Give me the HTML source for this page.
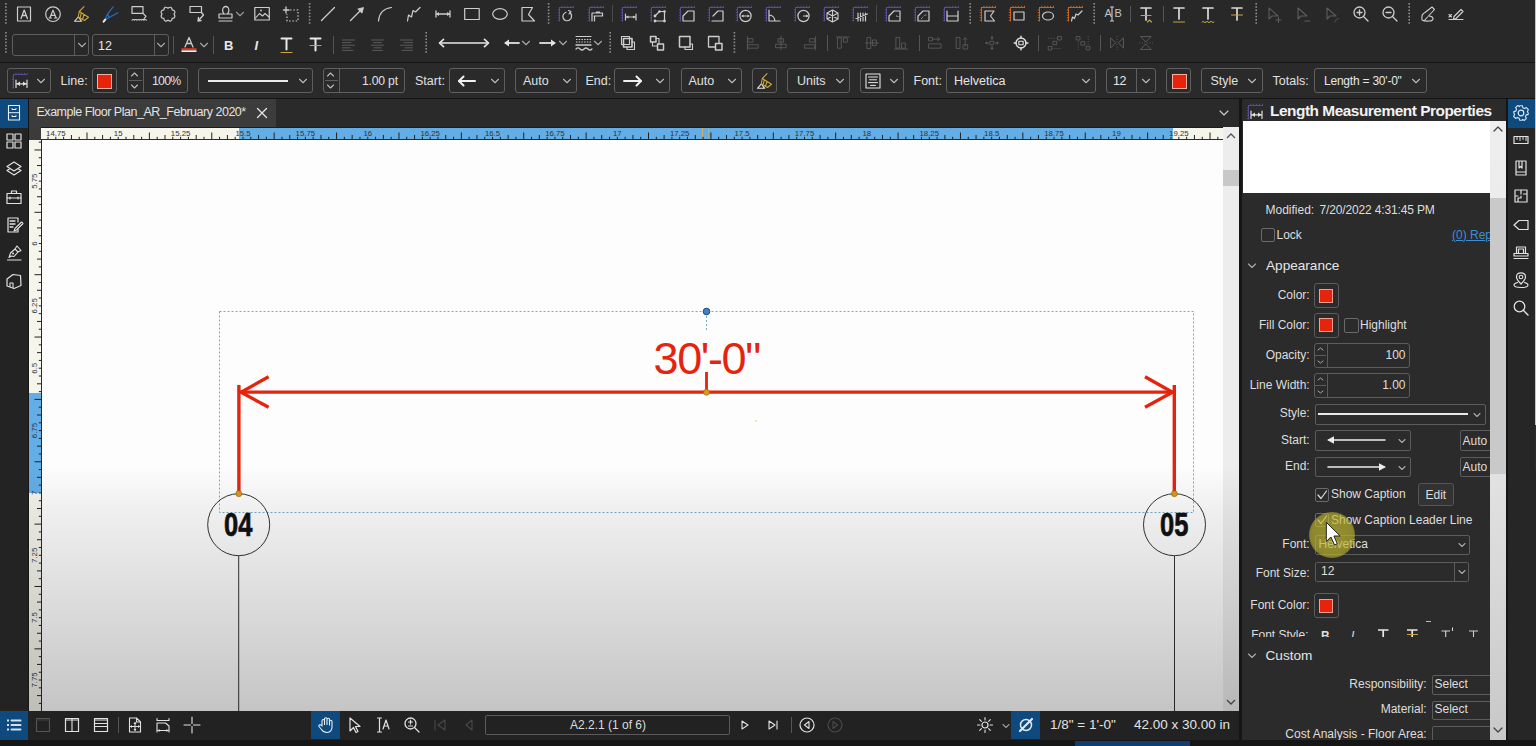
<!DOCTYPE html><html><head><meta charset="utf-8"><style>
html,body{margin:0;padding:0;width:1536px;height:746px;overflow:hidden;background:#282828;}
body{position:relative;font-family:"Liberation Sans",sans-serif;}
.t{position:absolute;white-space:nowrap;line-height:1;}
svg{overflow:visible;position:absolute}
</style></head><body>
<div style="position:absolute;left:0px;top:0px;width:1536px;height:62px;background:#282828"></div>
<div style="position:absolute;left:0px;top:62px;width:1536px;height:1px;background:#141414"></div>
<div style="position:absolute;left:0px;top:63px;width:1536px;height:35px;background:#2a2a2a"></div>
<div style="position:absolute;left:0px;top:98px;width:1536px;height:1px;background:#141414"></div>
<div style="position:absolute;left:0px;top:99px;width:28px;height:612px;background:#232323"></div>
<div style="position:absolute;left:28px;top:99px;width:1px;height:612px;background:#151515"></div>
<div style="position:absolute;left:0px;top:99px;width:28px;height:29px;background:#0f4a7e"></div>
<div style="position:absolute;left:29px;top:99px;width:1210px;height:28px;background:#2a2a2a"></div>
<div style="position:absolute;left:29px;top:99px;width:247px;height:28px;background:#3c3c3c"></div>
<div style="position:absolute;left:42px;top:140px;width:1181px;height:571px;background:#fdfdfd"></div>
<div style="position:absolute;left:0px;top:711px;width:1240px;height:29px;background:#222222"></div>
<div style="position:absolute;left:0px;top:711px;width:28px;height:29px;background:#0f4a7e"></div>
<div style="position:absolute;left:0px;top:740px;width:1536px;height:6px;background:#161616"></div>
<div style="position:absolute;left:1075px;top:741px;width:115px;height:5px;background:#113e6e"></div>
<div style="position:absolute;left:1239px;top:99px;width:3px;height:641px;background:#151515"></div>
<div style="position:absolute;left:1242px;top:99px;width:264px;height:641px;background:#2b2b2b"></div>
<div style="position:absolute;left:1243px;top:121px;width:247px;height:72px;background:#ffffff"></div>
<div style="position:absolute;left:1490px;top:121px;width:16px;height:619px;background:linear-gradient(#eeeeee,#e6e6e6 50%,#c8c8c8)"></div>
<div style="position:absolute;left:1490px;top:198px;width:16px;height:276px;background:#c9c9c9"></div>
<div style="position:absolute;left:1506px;top:99px;width:2px;height:641px;background:#151515"></div>
<div style="position:absolute;left:1508px;top:99px;width:28px;height:641px;background:#262626"></div>
<div style="position:absolute;left:1508px;top:99px;width:28px;height:29px;background:#0f4a7e"></div>
<div style="position:absolute;left:41px;top:127px;width:1182px;height:1px;background:#1c1c1c"></div>
<div style="position:absolute;left:29px;top:127px;width:12px;height:13px;background:#3b3b3b"></div>
<div style="position:absolute;left:41px;top:128px;width:1182px;height:11px;background:#f5f5ec"></div>
<div style="position:absolute;left:239px;top:128px;width:934px;height:11px;background:#63aee6"></div>
<div style="position:absolute;left:41px;top:139px;width:1182px;height:1px;background:#2a2a2a"></div>
<div style="position:absolute;left:702px;top:128px;width:1px;height:11px;background:#dcae5a;opacity:0.85"></div>
<div style="position:absolute;left:708px;top:128px;width:1px;height:11px;background:#c9b07a;opacity:0.5"></div>
<svg style="position:absolute;left:41px;top:128px;overflow:hidden" width="1182" height="11" viewBox="0 0 1182 11"><text x="14.81" y="8" text-anchor="middle" font-size="7.8" fill="#333" font-family="Liberation Sans">14.75</text><text x="77.20" y="8" text-anchor="middle" font-size="7.8" fill="#333" font-family="Liberation Sans">15</text><text x="139.59" y="8" text-anchor="middle" font-size="7.8" fill="#333" font-family="Liberation Sans">15.25</text><text x="201.98" y="8" text-anchor="middle" font-size="7.8" fill="#333" font-family="Liberation Sans">15.5</text><text x="264.37" y="8" text-anchor="middle" font-size="7.8" fill="#333" font-family="Liberation Sans">15.75</text><text x="326.76" y="8" text-anchor="middle" font-size="7.8" fill="#333" font-family="Liberation Sans">16</text><text x="389.15" y="8" text-anchor="middle" font-size="7.8" fill="#333" font-family="Liberation Sans">16.25</text><text x="451.54" y="8" text-anchor="middle" font-size="7.8" fill="#333" font-family="Liberation Sans">16.5</text><text x="513.93" y="8" text-anchor="middle" font-size="7.8" fill="#333" font-family="Liberation Sans">16.75</text><text x="576.32" y="8" text-anchor="middle" font-size="7.8" fill="#333" font-family="Liberation Sans">17</text><text x="638.71" y="8" text-anchor="middle" font-size="7.8" fill="#333" font-family="Liberation Sans">17.25</text><text x="701.10" y="8" text-anchor="middle" font-size="7.8" fill="#333" font-family="Liberation Sans">17.5</text><text x="763.49" y="8" text-anchor="middle" font-size="7.8" fill="#333" font-family="Liberation Sans">17.75</text><text x="825.88" y="8" text-anchor="middle" font-size="7.8" fill="#333" font-family="Liberation Sans">18</text><text x="888.27" y="8" text-anchor="middle" font-size="7.8" fill="#333" font-family="Liberation Sans">18.25</text><text x="950.66" y="8" text-anchor="middle" font-size="7.8" fill="#333" font-family="Liberation Sans">18.5</text><text x="1013.05" y="8" text-anchor="middle" font-size="7.8" fill="#333" font-family="Liberation Sans">18.75</text><text x="1075.44" y="8" text-anchor="middle" font-size="7.8" fill="#333" font-family="Liberation Sans">19</text><text x="1137.83" y="8" text-anchor="middle" font-size="7.8" fill="#333" font-family="Liberation Sans">19.25</text><rect x="6.51" y="8.80" width="1" height="2.2" fill="#222"/><rect x="14.31" y="8.80" width="1" height="2.2" fill="#222"/><rect x="22.11" y="8.80" width="1" height="2.2" fill="#222"/><rect x="29.91" y="7.00" width="1" height="4" fill="#222"/><rect x="37.71" y="8.80" width="1" height="2.2" fill="#222"/><rect x="45.50" y="4.50" width="1" height="6.5" fill="#222"/><rect x="53.30" y="8.80" width="1" height="2.2" fill="#222"/><rect x="61.10" y="7.00" width="1" height="4" fill="#222"/><rect x="68.90" y="8.80" width="1" height="2.2" fill="#222"/><rect x="76.70" y="8.80" width="1" height="2.2" fill="#222"/><rect x="84.50" y="8.80" width="1" height="2.2" fill="#222"/><rect x="92.30" y="7.00" width="1" height="4" fill="#222"/><rect x="100.10" y="8.80" width="1" height="2.2" fill="#222"/><rect x="107.89" y="4.50" width="1" height="6.5" fill="#222"/><rect x="115.69" y="8.80" width="1" height="2.2" fill="#222"/><rect x="123.49" y="7.00" width="1" height="4" fill="#222"/><rect x="131.29" y="8.80" width="1" height="2.2" fill="#222"/><rect x="139.09" y="8.80" width="1" height="2.2" fill="#222"/><rect x="146.89" y="8.80" width="1" height="2.2" fill="#222"/><rect x="154.69" y="7.00" width="1" height="4" fill="#222"/><rect x="162.49" y="8.80" width="1" height="2.2" fill="#222"/><rect x="170.28" y="4.50" width="1" height="6.5" fill="#222"/><rect x="178.08" y="8.80" width="1" height="2.2" fill="#222"/><rect x="185.88" y="7.00" width="1" height="4" fill="#222"/><rect x="193.68" y="8.80" width="1" height="2.2" fill="#222"/><rect x="201.48" y="8.80" width="1" height="2.2" fill="#222"/><rect x="209.28" y="8.80" width="1" height="2.2" fill="#222"/><rect x="217.08" y="7.00" width="1" height="4" fill="#222"/><rect x="224.88" y="8.80" width="1" height="2.2" fill="#222"/><rect x="232.68" y="4.50" width="1" height="6.5" fill="#222"/><rect x="240.47" y="8.80" width="1" height="2.2" fill="#222"/><rect x="248.27" y="7.00" width="1" height="4" fill="#222"/><rect x="256.07" y="8.80" width="1" height="2.2" fill="#222"/><rect x="263.87" y="8.80" width="1" height="2.2" fill="#222"/><rect x="271.67" y="8.80" width="1" height="2.2" fill="#222"/><rect x="279.47" y="7.00" width="1" height="4" fill="#222"/><rect x="287.27" y="8.80" width="1" height="2.2" fill="#222"/><rect x="295.06" y="4.50" width="1" height="6.5" fill="#222"/><rect x="302.86" y="8.80" width="1" height="2.2" fill="#222"/><rect x="310.66" y="7.00" width="1" height="4" fill="#222"/><rect x="318.46" y="8.80" width="1" height="2.2" fill="#222"/><rect x="326.26" y="8.80" width="1" height="2.2" fill="#222"/><rect x="334.06" y="8.80" width="1" height="2.2" fill="#222"/><rect x="341.86" y="7.00" width="1" height="4" fill="#222"/><rect x="349.66" y="8.80" width="1" height="2.2" fill="#222"/><rect x="357.45" y="4.50" width="1" height="6.5" fill="#222"/><rect x="365.25" y="8.80" width="1" height="2.2" fill="#222"/><rect x="373.05" y="7.00" width="1" height="4" fill="#222"/><rect x="380.85" y="8.80" width="1" height="2.2" fill="#222"/><rect x="388.65" y="8.80" width="1" height="2.2" fill="#222"/><rect x="396.45" y="8.80" width="1" height="2.2" fill="#222"/><rect x="404.25" y="7.00" width="1" height="4" fill="#222"/><rect x="412.05" y="8.80" width="1" height="2.2" fill="#222"/><rect x="419.85" y="4.50" width="1" height="6.5" fill="#222"/><rect x="427.64" y="8.80" width="1" height="2.2" fill="#222"/><rect x="435.44" y="7.00" width="1" height="4" fill="#222"/><rect x="443.24" y="8.80" width="1" height="2.2" fill="#222"/><rect x="451.04" y="8.80" width="1" height="2.2" fill="#222"/><rect x="458.84" y="8.80" width="1" height="2.2" fill="#222"/><rect x="466.64" y="7.00" width="1" height="4" fill="#222"/><rect x="474.44" y="8.80" width="1" height="2.2" fill="#222"/><rect x="482.24" y="4.50" width="1" height="6.5" fill="#222"/><rect x="490.03" y="8.80" width="1" height="2.2" fill="#222"/><rect x="497.83" y="7.00" width="1" height="4" fill="#222"/><rect x="505.63" y="8.80" width="1" height="2.2" fill="#222"/><rect x="513.43" y="8.80" width="1" height="2.2" fill="#222"/><rect x="521.23" y="8.80" width="1" height="2.2" fill="#222"/><rect x="529.03" y="7.00" width="1" height="4" fill="#222"/><rect x="536.83" y="8.80" width="1" height="2.2" fill="#222"/><rect x="544.62" y="4.50" width="1" height="6.5" fill="#222"/><rect x="552.42" y="8.80" width="1" height="2.2" fill="#222"/><rect x="560.22" y="7.00" width="1" height="4" fill="#222"/><rect x="568.02" y="8.80" width="1" height="2.2" fill="#222"/><rect x="575.82" y="8.80" width="1" height="2.2" fill="#222"/><rect x="583.62" y="8.80" width="1" height="2.2" fill="#222"/><rect x="591.42" y="7.00" width="1" height="4" fill="#222"/><rect x="599.22" y="8.80" width="1" height="2.2" fill="#222"/><rect x="607.01" y="4.50" width="1" height="6.5" fill="#222"/><rect x="614.81" y="8.80" width="1" height="2.2" fill="#222"/><rect x="622.61" y="7.00" width="1" height="4" fill="#222"/><rect x="630.41" y="8.80" width="1" height="2.2" fill="#222"/><rect x="638.21" y="8.80" width="1" height="2.2" fill="#222"/><rect x="646.01" y="8.80" width="1" height="2.2" fill="#222"/><rect x="653.81" y="7.00" width="1" height="4" fill="#222"/><rect x="661.61" y="8.80" width="1" height="2.2" fill="#222"/><rect x="669.40" y="4.50" width="1" height="6.5" fill="#222"/><rect x="677.20" y="8.80" width="1" height="2.2" fill="#222"/><rect x="685.00" y="7.00" width="1" height="4" fill="#222"/><rect x="692.80" y="8.80" width="1" height="2.2" fill="#222"/><rect x="700.60" y="8.80" width="1" height="2.2" fill="#222"/><rect x="708.40" y="8.80" width="1" height="2.2" fill="#222"/><rect x="716.20" y="7.00" width="1" height="4" fill="#222"/><rect x="724.00" y="8.80" width="1" height="2.2" fill="#222"/><rect x="731.79" y="4.50" width="1" height="6.5" fill="#222"/><rect x="739.59" y="8.80" width="1" height="2.2" fill="#222"/><rect x="747.39" y="7.00" width="1" height="4" fill="#222"/><rect x="755.19" y="8.80" width="1" height="2.2" fill="#222"/><rect x="762.99" y="8.80" width="1" height="2.2" fill="#222"/><rect x="770.79" y="8.80" width="1" height="2.2" fill="#222"/><rect x="778.59" y="7.00" width="1" height="4" fill="#222"/><rect x="786.39" y="8.80" width="1" height="2.2" fill="#222"/><rect x="794.19" y="4.50" width="1" height="6.5" fill="#222"/><rect x="801.98" y="8.80" width="1" height="2.2" fill="#222"/><rect x="809.78" y="7.00" width="1" height="4" fill="#222"/><rect x="817.58" y="8.80" width="1" height="2.2" fill="#222"/><rect x="825.38" y="8.80" width="1" height="2.2" fill="#222"/><rect x="833.18" y="8.80" width="1" height="2.2" fill="#222"/><rect x="840.98" y="7.00" width="1" height="4" fill="#222"/><rect x="848.78" y="8.80" width="1" height="2.2" fill="#222"/><rect x="856.58" y="4.50" width="1" height="6.5" fill="#222"/><rect x="864.37" y="8.80" width="1" height="2.2" fill="#222"/><rect x="872.17" y="7.00" width="1" height="4" fill="#222"/><rect x="879.97" y="8.80" width="1" height="2.2" fill="#222"/><rect x="887.77" y="8.80" width="1" height="2.2" fill="#222"/><rect x="895.57" y="8.80" width="1" height="2.2" fill="#222"/><rect x="903.37" y="7.00" width="1" height="4" fill="#222"/><rect x="911.17" y="8.80" width="1" height="2.2" fill="#222"/><rect x="918.97" y="4.50" width="1" height="6.5" fill="#222"/><rect x="926.76" y="8.80" width="1" height="2.2" fill="#222"/><rect x="934.56" y="7.00" width="1" height="4" fill="#222"/><rect x="942.36" y="8.80" width="1" height="2.2" fill="#222"/><rect x="950.16" y="8.80" width="1" height="2.2" fill="#222"/><rect x="957.96" y="8.80" width="1" height="2.2" fill="#222"/><rect x="965.76" y="7.00" width="1" height="4" fill="#222"/><rect x="973.56" y="8.80" width="1" height="2.2" fill="#222"/><rect x="981.36" y="4.50" width="1" height="6.5" fill="#222"/><rect x="989.15" y="8.80" width="1" height="2.2" fill="#222"/><rect x="996.95" y="7.00" width="1" height="4" fill="#222"/><rect x="1004.75" y="8.80" width="1" height="2.2" fill="#222"/><rect x="1012.55" y="8.80" width="1" height="2.2" fill="#222"/><rect x="1020.35" y="8.80" width="1" height="2.2" fill="#222"/><rect x="1028.15" y="7.00" width="1" height="4" fill="#222"/><rect x="1035.95" y="8.80" width="1" height="2.2" fill="#222"/><rect x="1043.74" y="4.50" width="1" height="6.5" fill="#222"/><rect x="1051.54" y="8.80" width="1" height="2.2" fill="#222"/><rect x="1059.34" y="7.00" width="1" height="4" fill="#222"/><rect x="1067.14" y="8.80" width="1" height="2.2" fill="#222"/><rect x="1074.94" y="8.80" width="1" height="2.2" fill="#222"/><rect x="1082.74" y="8.80" width="1" height="2.2" fill="#222"/><rect x="1090.54" y="7.00" width="1" height="4" fill="#222"/><rect x="1098.34" y="8.80" width="1" height="2.2" fill="#222"/><rect x="1106.14" y="4.50" width="1" height="6.5" fill="#222"/><rect x="1113.93" y="8.80" width="1" height="2.2" fill="#222"/><rect x="1121.73" y="7.00" width="1" height="4" fill="#222"/><rect x="1129.53" y="8.80" width="1" height="2.2" fill="#222"/><rect x="1137.33" y="8.80" width="1" height="2.2" fill="#222"/><rect x="1145.13" y="8.80" width="1" height="2.2" fill="#222"/><rect x="1152.93" y="7.00" width="1" height="4" fill="#222"/><rect x="1160.73" y="8.80" width="1" height="2.2" fill="#222"/><rect x="1168.53" y="4.50" width="1" height="6.5" fill="#222"/><rect x="1176.32" y="8.80" width="1" height="2.2" fill="#222"/></svg>
<div style="position:absolute;left:29px;top:140px;width:12px;height:571px;background:#f5f5ec"></div>
<div style="position:absolute;left:29px;top:393px;width:12px;height:100px;background:#63aee6"></div>
<div style="position:absolute;left:41px;top:140px;width:1px;height:571px;background:#2a2a2a"></div>
<svg style="position:absolute;left:29px;top:140px;overflow:hidden" width="12" height="571" viewBox="0 0 12 571"><text x="0" y="0" transform="translate(8.3 41.14) rotate(-90)" text-anchor="middle" font-size="7.8" fill="#333" font-family="Liberation Sans">5.75</text><text x="0" y="0" transform="translate(8.3 103.50) rotate(-90)" text-anchor="middle" font-size="7.8" fill="#333" font-family="Liberation Sans">6</text><text x="0" y="0" transform="translate(8.3 165.86) rotate(-90)" text-anchor="middle" font-size="7.8" fill="#333" font-family="Liberation Sans">6.25</text><text x="0" y="0" transform="translate(8.3 228.22) rotate(-90)" text-anchor="middle" font-size="7.8" fill="#333" font-family="Liberation Sans">6.5</text><text x="0" y="0" transform="translate(8.3 290.58) rotate(-90)" text-anchor="middle" font-size="7.8" fill="#333" font-family="Liberation Sans">6.75</text><text x="0" y="0" transform="translate(8.3 352.94) rotate(-90)" text-anchor="middle" font-size="7.8" fill="#333" font-family="Liberation Sans">7</text><text x="0" y="0" transform="translate(8.3 415.30) rotate(-90)" text-anchor="middle" font-size="7.8" fill="#333" font-family="Liberation Sans">7.25</text><text x="0" y="0" transform="translate(8.3 477.66) rotate(-90)" text-anchor="middle" font-size="7.8" fill="#333" font-family="Liberation Sans">7.5</text><text x="0" y="0" transform="translate(8.3 540.02) rotate(-90)" text-anchor="middle" font-size="7.8" fill="#333" font-family="Liberation Sans">7.75</text><rect x="9.80" y="1.66" width="2.2" height="1" fill="#222"/><rect x="5.50" y="9.46" width="6.5" height="1" fill="#222"/><rect x="9.80" y="17.25" width="2.2" height="1" fill="#222"/><rect x="8.00" y="25.05" width="4" height="1" fill="#222"/><rect x="9.80" y="32.84" width="2.2" height="1" fill="#222"/><rect x="9.80" y="40.64" width="2.2" height="1" fill="#222"/><rect x="9.80" y="48.44" width="2.2" height="1" fill="#222"/><rect x="8.00" y="56.23" width="4" height="1" fill="#222"/><rect x="9.80" y="64.03" width="2.2" height="1" fill="#222"/><rect x="5.50" y="71.82" width="6.5" height="1" fill="#222"/><rect x="9.80" y="79.61" width="2.2" height="1" fill="#222"/><rect x="8.00" y="87.41" width="4" height="1" fill="#222"/><rect x="9.80" y="95.20" width="2.2" height="1" fill="#222"/><rect x="9.80" y="103.00" width="2.2" height="1" fill="#222"/><rect x="9.80" y="110.79" width="2.2" height="1" fill="#222"/><rect x="8.00" y="118.59" width="4" height="1" fill="#222"/><rect x="9.80" y="126.38" width="2.2" height="1" fill="#222"/><rect x="5.50" y="134.18" width="6.5" height="1" fill="#222"/><rect x="9.80" y="141.98" width="2.2" height="1" fill="#222"/><rect x="8.00" y="149.77" width="4" height="1" fill="#222"/><rect x="9.80" y="157.56" width="2.2" height="1" fill="#222"/><rect x="9.80" y="165.36" width="2.2" height="1" fill="#222"/><rect x="9.80" y="173.15" width="2.2" height="1" fill="#222"/><rect x="8.00" y="180.95" width="4" height="1" fill="#222"/><rect x="9.80" y="188.75" width="2.2" height="1" fill="#222"/><rect x="5.50" y="196.54" width="6.5" height="1" fill="#222"/><rect x="9.80" y="204.33" width="2.2" height="1" fill="#222"/><rect x="8.00" y="212.13" width="4" height="1" fill="#222"/><rect x="9.80" y="219.92" width="2.2" height="1" fill="#222"/><rect x="9.80" y="227.72" width="2.2" height="1" fill="#222"/><rect x="9.80" y="235.51" width="2.2" height="1" fill="#222"/><rect x="8.00" y="243.31" width="4" height="1" fill="#222"/><rect x="9.80" y="251.11" width="2.2" height="1" fill="#222"/><rect x="5.50" y="258.90" width="6.5" height="1" fill="#222"/><rect x="9.80" y="266.69" width="2.2" height="1" fill="#222"/><rect x="8.00" y="274.49" width="4" height="1" fill="#222"/><rect x="9.80" y="282.28" width="2.2" height="1" fill="#222"/><rect x="9.80" y="290.08" width="2.2" height="1" fill="#222"/><rect x="9.80" y="297.88" width="2.2" height="1" fill="#222"/><rect x="8.00" y="305.67" width="4" height="1" fill="#222"/><rect x="9.80" y="313.47" width="2.2" height="1" fill="#222"/><rect x="5.50" y="321.26" width="6.5" height="1" fill="#222"/><rect x="9.80" y="329.06" width="2.2" height="1" fill="#222"/><rect x="8.00" y="336.85" width="4" height="1" fill="#222"/><rect x="9.80" y="344.64" width="2.2" height="1" fill="#222"/><rect x="9.80" y="352.44" width="2.2" height="1" fill="#222"/><rect x="9.80" y="360.24" width="2.2" height="1" fill="#222"/><rect x="8.00" y="368.03" width="4" height="1" fill="#222"/><rect x="9.80" y="375.83" width="2.2" height="1" fill="#222"/><rect x="5.50" y="383.62" width="6.5" height="1" fill="#222"/><rect x="9.80" y="391.41" width="2.2" height="1" fill="#222"/><rect x="8.00" y="399.21" width="4" height="1" fill="#222"/><rect x="9.80" y="407.00" width="2.2" height="1" fill="#222"/><rect x="9.80" y="414.80" width="2.2" height="1" fill="#222"/><rect x="9.80" y="422.60" width="2.2" height="1" fill="#222"/><rect x="8.00" y="430.39" width="4" height="1" fill="#222"/><rect x="9.80" y="438.18" width="2.2" height="1" fill="#222"/><rect x="5.50" y="445.98" width="6.5" height="1" fill="#222"/><rect x="9.80" y="453.77" width="2.2" height="1" fill="#222"/><rect x="8.00" y="461.57" width="4" height="1" fill="#222"/><rect x="9.80" y="469.37" width="2.2" height="1" fill="#222"/><rect x="9.80" y="477.16" width="2.2" height="1" fill="#222"/><rect x="9.80" y="484.95" width="2.2" height="1" fill="#222"/><rect x="8.00" y="492.75" width="4" height="1" fill="#222"/><rect x="9.80" y="500.55" width="2.2" height="1" fill="#222"/><rect x="5.50" y="508.34" width="6.5" height="1" fill="#222"/><rect x="9.80" y="516.13" width="2.2" height="1" fill="#222"/><rect x="8.00" y="523.93" width="4" height="1" fill="#222"/><rect x="9.80" y="531.72" width="2.2" height="1" fill="#222"/><rect x="9.80" y="539.52" width="2.2" height="1" fill="#222"/><rect x="9.80" y="547.32" width="2.2" height="1" fill="#222"/><rect x="8.00" y="555.11" width="4" height="1" fill="#222"/><rect x="9.80" y="562.90" width="2.2" height="1" fill="#222"/></svg>
<div style="position:absolute;left:1223px;top:127px;width:16px;height:584px;background:#ededed"></div>
<div style="position:absolute;left:1223px;top:170px;width:16px;height:16px;background:#c8c8c8"></div>
<svg style="position:absolute;left:1223px;top:127px;" width="16" height="16" viewBox="0 0 16 16"><path d="M4 11 L8 7 L12 11" stroke="#555" stroke-width="1.3" fill="none"/></svg>
<svg style="position:absolute;left:1223px;top:695px;" width="16" height="16" viewBox="0 0 16 16"><path d="M4 5 L8 9 L12 5" stroke="#555" stroke-width="1.3" fill="none"/></svg>
<svg style="position:absolute;left:0px;top:0px;pointer-events:none" width="1536" height="746" viewBox="0 0 1536 746"><rect x="219.5" y="311.5" width="974" height="201" fill="none" stroke="#74aac8" stroke-width="1" stroke-dasharray="2 2"/><line x1="706.5" y1="312" x2="706.5" y2="330" stroke="#74aac8" stroke-width="1" stroke-dasharray="2 2"/><line x1="238.7" y1="556" x2="238.7" y2="711" stroke="#333" stroke-width="1"/><line x1="1174.5" y1="556" x2="1174.5" y2="711" stroke="#333" stroke-width="1"/><circle cx="238.7" cy="524.7" r="31" fill="none" stroke="#333" stroke-width="1"/><circle cx="1174.5" cy="524.7" r="31" fill="none" stroke="#333" stroke-width="1"/><line x1="239" y1="392.2" x2="1174" y2="392.2" stroke="#e5240e" stroke-width="3.3"/><line x1="238.9" y1="385" x2="238.9" y2="494" stroke="#e5240e" stroke-width="3.4"/><line x1="1174.3" y1="385" x2="1174.3" y2="494" stroke="#e5240e" stroke-width="3.4"/><path d="M268.6 376.8 L241 392.2 L268.6 407.2" fill="none" stroke="#e5240e" stroke-width="3.3"/><path d="M1145 376.8 L1172.5 392.2 L1145 407.2" fill="none" stroke="#e5240e" stroke-width="3.3"/><line x1="706.5" y1="372" x2="706.5" y2="392" stroke="#e5240e" stroke-width="2.8"/><circle cx="706.5" cy="311.5" r="3.3" fill="#3f82c8" stroke="#1d4a7a" stroke-width="1"/><circle cx="238.8" cy="493.7" r="3" fill="#d89a1c" stroke="#8a6a10" stroke-width="0.6"/><circle cx="1174.4" cy="493.7" r="3" fill="#d89a1c" stroke="#8a6a10" stroke-width="0.6"/><circle cx="706.5" cy="392.3" r="3" fill="#d89a1c" stroke="#8a6a10" stroke-width="0.6"/></svg>
<div style="position:absolute;left:754.5px;top:419.5px;width:2px;height:2px;background:#efe27a;border-radius:1px"></div>
<div class="t" style="left:653.5px;top:335.8px;font-size:45px;color:#e5240e;font-weight:normal;letter-spacing:-1.4px;">30'-0"</div>
<div class="t" style="left:223.8px;top:507px;font-size:34px;color:#111;font-weight:bold;-webkit-text-stroke:0.7px #111;transform:scaleX(0.75);transform-origin:0 0;">04</div>
<div class="t" style="left:1159.6px;top:507px;font-size:34px;color:#111;font-weight:bold;-webkit-text-stroke:0.7px #111;transform:scaleX(0.75);transform-origin:0 0;">05</div>
<svg style="position:absolute;left:0px;top:3px;" width="1536" height="22" viewBox="0 0 1536 22"><rect x="5.10" y="0.00" width="1.6" height="1.6" fill="#8c8c8c"/><rect x="5.10" y="3.20" width="1.6" height="1.6" fill="#8c8c8c"/><rect x="5.10" y="6.40" width="1.6" height="1.6" fill="#8c8c8c"/><rect x="5.10" y="9.60" width="1.6" height="1.6" fill="#8c8c8c"/><rect x="5.10" y="12.80" width="1.6" height="1.6" fill="#8c8c8c"/><rect x="5.10" y="16.00" width="1.6" height="1.6" fill="#8c8c8c"/><rect x="5.10" y="19.20" width="1.6" height="1.6" fill="#8c8c8c"/></svg>
<svg style="position:absolute;left:15.0px;top:4.5px;" width="18" height="18" viewBox="0 0 18 18"><rect x="2.5" y="2" width="13" height="14" stroke="#cdcdcd" stroke-width="1.2" fill="none" stroke-linecap="round" stroke-linejoin="round"/><path d="M6 13.5 L9.2 5 L12.4 13.5 M7.2 10.5 H11.2" stroke="#cdcdcd" stroke-width="1.3" fill="none" stroke-linecap="round" stroke-linejoin="round"/></svg>
<svg style="position:absolute;left:43.5px;top:4.5px;" width="18" height="18" viewBox="0 0 18 18"><circle cx="9" cy="9.2" r="7.3" stroke="#cdcdcd" stroke-width="1.2" fill="none" stroke-linecap="round" stroke-linejoin="round"/><path d="M5.8 13 L9 5.2 L12.2 13 M7 10.3 H11 M5 13 H7.5 M10.5 13 H13" stroke="#cdcdcd" stroke-width="1.2" fill="none" stroke-linecap="round" stroke-linejoin="round"/></svg>
<svg style="position:absolute;left:73.0px;top:4.5px;" width="18" height="18" viewBox="0 0 18 18"><path d="M1.5 16.3 H8.7 L5.2 12 Z" stroke="#d8d8d8" stroke-width="1.1" fill="none" stroke-linecap="round" stroke-linejoin="round"/><path d="M11 1.7 L6.3 6.5 L15.5 12.3 L11.5 15.5 L5.2 12 L6.3 6.5 M8.3 8 L7 13 M11 9.5 L9.5 14.5" stroke="#c9a53a" stroke-width="1.1" fill="none" stroke-linecap="round" stroke-linejoin="round"/></svg>
<svg style="position:absolute;left:100.5px;top:4.5px;" width="18" height="18" viewBox="0 0 18 18"><path d="M12.1 1.9 L6.4 9.2 L4 15 M16.8 7.8 L8.3 12.3 L4 15 M6.4 9.2 L8.3 12.3" stroke="#2468a8" stroke-width="1.4" fill="none" stroke-linecap="round" stroke-linejoin="round"/><path d="M2.6 16.6 L4.2 14.6" stroke="#e0eef8" stroke-width="2" fill="none" stroke-linecap="round" stroke-linejoin="round"/></svg>
<svg style="position:absolute;left:130.0px;top:4.5px;" width="18" height="18" viewBox="0 0 18 18"><rect x="2" y="1.6" width="11" height="6.8" stroke="#cdcdcd" stroke-width="1.2" fill="none" stroke-linecap="round" stroke-linejoin="round"/><path d="M13 8.4 L16 11.2 L13.6 14.5" stroke="#cdcdcd" stroke-width="1.2" fill="none" stroke-linecap="round" stroke-linejoin="round"/><path d="M2 15.2 Q3.2 13.8 4.4 15.2 Q5.6 13.8 6.8 15.2 Q8 13.8 9.2 15.2 Q10.4 13.8 11.6 15.2 Q12.8 13.8 14 15.2 Q15.2 13.8 16.4 15.2" stroke="#cdcdcd" stroke-width="1.1" fill="none" stroke-linecap="round" stroke-linejoin="round"/></svg>
<svg style="position:absolute;left:159.0px;top:4.5px;" width="18" height="18" viewBox="0 0 18 18"><path d="M9.00 3.20 Q12.52 0.70 13.24 4.96 Q17.50 5.68 15.00 9.20 Q17.50 12.72 13.24 13.44 Q12.52 17.70 9.00 15.20 Q5.48 17.70 4.76 13.44 Q0.50 12.72 3.00 9.20 Q0.50 5.68 4.76 4.96 Q5.48 0.70 9.00 3.20Z" stroke="#cdcdcd" stroke-width="1.2" fill="none" stroke-linecap="round" stroke-linejoin="round"/></svg>
<svg style="position:absolute;left:187.6px;top:4.5px;" width="18" height="18" viewBox="0 0 18 18"><rect x="2" y="1.5" width="11.5" height="6" stroke="#cdcdcd" stroke-width="1.2" fill="none" stroke-linecap="round" stroke-linejoin="round"/><path d="M13.5 7.5 L15.5 10 L10 16 M10 16 L10.5 12.5 M10 16 L13 15.5" stroke="#cdcdcd" stroke-width="1.3" fill="none" stroke-linecap="round" stroke-linejoin="round"/></svg>
<svg style="position:absolute;left:217.0px;top:4.5px;" width="18" height="18" viewBox="0 0 18 18"><path d="M7 9 Q4.5 5.5 6.5 2.5 Q9 0.5 11 2.5 Q13 5.5 10.5 9 M2 9 H15 V13 H2 Z M2 16 H15" stroke="#cdcdcd" stroke-width="1.2" fill="none" stroke-linecap="round" stroke-linejoin="round"/></svg>
<svg style="position:absolute;left:234.6px;top:10px;" width="10" height="8" viewBox="0 0 10 8"><path d="M1.5 2.25 L5 5.75 L8.5 2.25" stroke="#999" stroke-width="1.1" fill="none" stroke-linecap="round" stroke-linejoin="round"/></svg>
<svg style="position:absolute;left:252.5px;top:4.5px;" width="18" height="18" viewBox="0 0 18 18"><rect x="1.8" y="2.5" width="14.5" height="12.5" stroke="#cdcdcd" stroke-width="1.2" fill="none" stroke-linecap="round" stroke-linejoin="round"/><path d="M2.5 13 L6.5 8.5 L9.5 11 L12 8.5 L16 12" stroke="#cdcdcd" stroke-width="1.1" fill="none" stroke-linecap="round" stroke-linejoin="round"/><circle cx="8" cy="5.5" r="0.9" fill="#cdcdcd"/></svg>
<svg style="position:absolute;left:281.5px;top:4.5px;" width="18" height="18" viewBox="0 0 18 18"><path d="M1.5 5 H7 M4 2 V8" stroke="#cdcdcd" stroke-width="1.3" fill="none" stroke-linecap="round" stroke-linejoin="round"/><path d="M8 5 H16 V16 H5 V9" stroke="#cdcdcd" stroke-width="1.2" fill="none" stroke-dasharray="1.5 1.8"/></svg>
<svg style="position:absolute;left:0px;top:3px;" width="1536" height="22" viewBox="0 0 1536 22"><rect x="308.80" y="0.00" width="1.6" height="1.6" fill="#8c8c8c"/><rect x="308.80" y="3.20" width="1.6" height="1.6" fill="#8c8c8c"/><rect x="308.80" y="6.40" width="1.6" height="1.6" fill="#8c8c8c"/><rect x="308.80" y="9.60" width="1.6" height="1.6" fill="#8c8c8c"/><rect x="308.80" y="12.80" width="1.6" height="1.6" fill="#8c8c8c"/><rect x="308.80" y="16.00" width="1.6" height="1.6" fill="#8c8c8c"/><rect x="308.80" y="19.20" width="1.6" height="1.6" fill="#8c8c8c"/></svg>
<svg style="position:absolute;left:318.6px;top:4.5px;" width="18" height="18" viewBox="0 0 18 18"><path d="M2.5 15.5 L15.5 2.5" stroke="#cdcdcd" stroke-width="1.3" fill="none" stroke-linecap="round" stroke-linejoin="round"/></svg>
<svg style="position:absolute;left:347.5px;top:4.5px;" width="18" height="18" viewBox="0 0 18 18"><path d="M2.5 15.5 L13.5 4.5" stroke="#cdcdcd" stroke-width="1.3" fill="none" stroke-linecap="round" stroke-linejoin="round"/><path d="M15.5 2.5 L9.8 4 L14 8.2 Z" fill="#cdcdcd" stroke="#cdcdcd" stroke-width="0.8"/></svg>
<svg style="position:absolute;left:376.3px;top:4.5px;" width="18" height="18" viewBox="0 0 18 18"><path d="M2.5 16 Q3.5 4 15.5 2.5" stroke="#cdcdcd" stroke-width="1.2" fill="none" stroke-linecap="round" stroke-linejoin="round"/></svg>
<svg style="position:absolute;left:405.0px;top:4.5px;" width="18" height="18" viewBox="0 0 18 18"><path d="M2.5 16 L3.5 10 L6.5 12 L8 5.5 L10.5 7 L15 2.5" stroke="#cdcdcd" stroke-width="1.2" fill="none" stroke-linecap="round" stroke-linejoin="round"/></svg>
<svg style="position:absolute;left:433.8px;top:4.5px;" width="18" height="18" viewBox="0 0 18 18"><path d="M2 6 V12 M16 6 V12 M2 9 H16" stroke="#cdcdcd" stroke-width="1.3" fill="none" stroke-linecap="round" stroke-linejoin="round"/><path d="M2 9 L5 7 V11 Z M16 9 L13 7 V11 Z" fill="#cdcdcd"/></svg>
<svg style="position:absolute;left:462.5px;top:4.5px;" width="18" height="18" viewBox="0 0 18 18"><rect x="1.7" y="3.5" width="14.5" height="11" stroke="#cdcdcd" stroke-width="1.2" fill="none" stroke-linecap="round" stroke-linejoin="round"/></svg>
<svg style="position:absolute;left:491.3px;top:4.5px;" width="18" height="18" viewBox="0 0 18 18"><ellipse cx="9" cy="9" rx="7.3" ry="5.3" stroke="#cdcdcd" stroke-width="1.2" fill="none" stroke-linecap="round" stroke-linejoin="round"/></svg>
<svg style="position:absolute;left:520.3px;top:4.5px;" width="18" height="18" viewBox="0 0 18 18"><path d="M2 2.5 H12.5 L8.5 9.5 L14.5 16 H2 Z" stroke="#cdcdcd" stroke-width="1.2" fill="none" stroke-linecap="round" stroke-linejoin="round"/></svg>
<svg style="position:absolute;left:0px;top:3px;" width="1536" height="22" viewBox="0 0 1536 22"><rect x="547.80" y="0.00" width="1.6" height="1.6" fill="#8c8c8c"/><rect x="547.80" y="3.20" width="1.6" height="1.6" fill="#8c8c8c"/><rect x="547.80" y="6.40" width="1.6" height="1.6" fill="#8c8c8c"/><rect x="547.80" y="9.60" width="1.6" height="1.6" fill="#8c8c8c"/><rect x="547.80" y="12.80" width="1.6" height="1.6" fill="#8c8c8c"/><rect x="547.80" y="16.00" width="1.6" height="1.6" fill="#8c8c8c"/><rect x="547.80" y="19.20" width="1.6" height="1.6" fill="#8c8c8c"/></svg>
<svg style="position:absolute;left:557.4px;top:5.0px;" width="18" height="18" viewBox="0 0 18 18"><path d="M2 2.5 H17 M2.5 2 V16.5" stroke="#5d4fa0" stroke-width="1" fill="none" opacity="0.9"/><rect x="4.5" y="0.8" width="0.9" height="1.6" fill="#5d4fa0"/><rect x="0.8" y="4.5" width="1.6" height="0.9" fill="#5d4fa0"/><rect x="7.4" y="0.8" width="0.9" height="1.6" fill="#5d4fa0"/><rect x="0.8" y="7.1" width="1.6" height="0.9" fill="#5d4fa0"/><rect x="10.3" y="0.8" width="0.9" height="1.6" fill="#5d4fa0"/><rect x="0.8" y="9.7" width="1.6" height="0.9" fill="#5d4fa0"/><rect x="13.2" y="0.8" width="0.9" height="1.6" fill="#5d4fa0"/><rect x="0.8" y="12.3" width="1.6" height="0.9" fill="#5d4fa0"/><rect x="16.1" y="0.8" width="0.9" height="1.6" fill="#5d4fa0"/><rect x="0.8" y="14.9" width="1.6" height="0.9" fill="#5d4fa0"/><path d="M13 7.5 Q15.5 10 14 13.5 Q12 16.5 8.5 15.5 Q5.5 14 6 10.5 Q6.5 8 9 7.2" stroke="#cdcdcd" stroke-width="1.2" fill="none" stroke-linecap="round" stroke-linejoin="round"/><path d="M11.5 5.5 L14 6.5 L12 9" stroke="#cdcdcd" stroke-width="1.1" fill="none" stroke-linecap="round" stroke-linejoin="round"/></svg>
<svg style="position:absolute;left:586.7px;top:5.0px;" width="18" height="18" viewBox="0 0 18 18"><path d="M2 2.5 H17 M2.5 2 V16.5" stroke="#5d4fa0" stroke-width="1" fill="none" opacity="0.9"/><rect x="4.5" y="0.8" width="0.9" height="1.6" fill="#5d4fa0"/><rect x="0.8" y="4.5" width="1.6" height="0.9" fill="#5d4fa0"/><rect x="7.4" y="0.8" width="0.9" height="1.6" fill="#5d4fa0"/><rect x="0.8" y="7.1" width="1.6" height="0.9" fill="#5d4fa0"/><rect x="10.3" y="0.8" width="0.9" height="1.6" fill="#5d4fa0"/><rect x="0.8" y="9.7" width="1.6" height="0.9" fill="#5d4fa0"/><rect x="13.2" y="0.8" width="0.9" height="1.6" fill="#5d4fa0"/><rect x="0.8" y="12.3" width="1.6" height="0.9" fill="#5d4fa0"/><rect x="16.1" y="0.8" width="0.9" height="1.6" fill="#5d4fa0"/><rect x="0.8" y="14.9" width="1.6" height="0.9" fill="#5d4fa0"/><path d="M5 16 V8 H15.5 V11 H7 M7.5 16 V11 M9.5 8 V7 H12.5 V8" stroke="#cdcdcd" stroke-width="1.2" fill="none" stroke-linecap="round" stroke-linejoin="round"/></svg>
<div style="position:absolute;left:612px;top:5px;width:1px;height:17px;background:#4a4a4a"></div>
<svg style="position:absolute;left:620.3px;top:5.0px;" width="18" height="18" viewBox="0 0 18 18"><path d="M2 2.5 H17 M2.5 2 V16.5" stroke="#5d4fa0" stroke-width="1" fill="none" opacity="0.9"/><rect x="4.5" y="0.8" width="0.9" height="1.6" fill="#5d4fa0"/><rect x="0.8" y="4.5" width="1.6" height="0.9" fill="#5d4fa0"/><rect x="7.4" y="0.8" width="0.9" height="1.6" fill="#5d4fa0"/><rect x="0.8" y="7.1" width="1.6" height="0.9" fill="#5d4fa0"/><rect x="10.3" y="0.8" width="0.9" height="1.6" fill="#5d4fa0"/><rect x="0.8" y="9.7" width="1.6" height="0.9" fill="#5d4fa0"/><rect x="13.2" y="0.8" width="0.9" height="1.6" fill="#5d4fa0"/><rect x="0.8" y="12.3" width="1.6" height="0.9" fill="#5d4fa0"/><rect x="16.1" y="0.8" width="0.9" height="1.6" fill="#5d4fa0"/><rect x="0.8" y="14.9" width="1.6" height="0.9" fill="#5d4fa0"/><path d="M5.5 9 V15 M16 9 V15 M5.5 12 H16" stroke="#cdcdcd" stroke-width="1.2" fill="none" stroke-linecap="round" stroke-linejoin="round"/><path d="M6 12 L8.5 10.5 V13.5 Z M15.5 12 L13 10.5 V13.5 Z" fill="#cdcdcd"/></svg>
<svg style="position:absolute;left:648.8px;top:5.0px;" width="18" height="18" viewBox="0 0 18 18"><path d="M2 2.5 H17 M2.5 2 V16.5" stroke="#5d4fa0" stroke-width="1" fill="none" opacity="0.9"/><rect x="4.5" y="0.8" width="0.9" height="1.6" fill="#5d4fa0"/><rect x="0.8" y="4.5" width="1.6" height="0.9" fill="#5d4fa0"/><rect x="7.4" y="0.8" width="0.9" height="1.6" fill="#5d4fa0"/><rect x="0.8" y="7.1" width="1.6" height="0.9" fill="#5d4fa0"/><rect x="10.3" y="0.8" width="0.9" height="1.6" fill="#5d4fa0"/><rect x="0.8" y="9.7" width="1.6" height="0.9" fill="#5d4fa0"/><rect x="13.2" y="0.8" width="0.9" height="1.6" fill="#5d4fa0"/><rect x="0.8" y="12.3" width="1.6" height="0.9" fill="#5d4fa0"/><rect x="16.1" y="0.8" width="0.9" height="1.6" fill="#5d4fa0"/><rect x="0.8" y="14.9" width="1.6" height="0.9" fill="#5d4fa0"/><path d="M6 11 L10.5 6.5 H15.5 V16 H6" stroke="#cdcdcd" stroke-width="1.2" fill="none" stroke-linecap="round" stroke-linejoin="round"/><circle cx="6" cy="11" r="1.4" fill="#cdcdcd"/><circle cx="10.5" cy="6.5" r="1.3" fill="#cdcdcd"/><circle cx="15.5" cy="6.5" r="1.3" fill="#cdcdcd"/><circle cx="15.5" cy="16" r="1.4" fill="#cdcdcd"/><circle cx="6" cy="16" r="1.4" fill="#cdcdcd"/></svg>
<svg style="position:absolute;left:677.8px;top:5.0px;" width="18" height="18" viewBox="0 0 18 18"><path d="M2 2.5 H17 M2.5 2 V16.5" stroke="#5d4fa0" stroke-width="1" fill="none" opacity="0.9"/><rect x="4.5" y="0.8" width="0.9" height="1.6" fill="#5d4fa0"/><rect x="0.8" y="4.5" width="1.6" height="0.9" fill="#5d4fa0"/><rect x="7.4" y="0.8" width="0.9" height="1.6" fill="#5d4fa0"/><rect x="0.8" y="7.1" width="1.6" height="0.9" fill="#5d4fa0"/><rect x="10.3" y="0.8" width="0.9" height="1.6" fill="#5d4fa0"/><rect x="0.8" y="9.7" width="1.6" height="0.9" fill="#5d4fa0"/><rect x="13.2" y="0.8" width="0.9" height="1.6" fill="#5d4fa0"/><rect x="0.8" y="12.3" width="1.6" height="0.9" fill="#5d4fa0"/><rect x="16.1" y="0.8" width="0.9" height="1.6" fill="#5d4fa0"/><rect x="0.8" y="14.9" width="1.6" height="0.9" fill="#5d4fa0"/><path d="M5 16 V11 L10 6 H16 V16 Z" stroke="#cdcdcd" stroke-width="1.2" fill="none" stroke-linecap="round" stroke-linejoin="round"/></svg>
<svg style="position:absolute;left:706.6px;top:5.0px;" width="18" height="18" viewBox="0 0 18 18"><path d="M2 2.5 H17 M2.5 2 V16.5" stroke="#5d4fa0" stroke-width="1" fill="none" opacity="0.9"/><rect x="4.5" y="0.8" width="0.9" height="1.6" fill="#5d4fa0"/><rect x="0.8" y="4.5" width="1.6" height="0.9" fill="#5d4fa0"/><rect x="7.4" y="0.8" width="0.9" height="1.6" fill="#5d4fa0"/><rect x="0.8" y="7.1" width="1.6" height="0.9" fill="#5d4fa0"/><rect x="10.3" y="0.8" width="0.9" height="1.6" fill="#5d4fa0"/><rect x="0.8" y="9.7" width="1.6" height="0.9" fill="#5d4fa0"/><rect x="13.2" y="0.8" width="0.9" height="1.6" fill="#5d4fa0"/><rect x="0.8" y="12.3" width="1.6" height="0.9" fill="#5d4fa0"/><rect x="16.1" y="0.8" width="0.9" height="1.6" fill="#5d4fa0"/><rect x="0.8" y="14.9" width="1.6" height="0.9" fill="#5d4fa0"/><path d="M5 16 H16 V6 H11 L6 11" stroke="#cdcdcd" stroke-width="1.2" fill="none" stroke-linecap="round" stroke-linejoin="round"/></svg>
<svg style="position:absolute;left:735.3px;top:5.0px;" width="18" height="18" viewBox="0 0 18 18"><path d="M2 2.5 H17 M2.5 2 V16.5" stroke="#5d4fa0" stroke-width="1" fill="none" opacity="0.9"/><rect x="4.5" y="0.8" width="0.9" height="1.6" fill="#5d4fa0"/><rect x="0.8" y="4.5" width="1.6" height="0.9" fill="#5d4fa0"/><rect x="7.4" y="0.8" width="0.9" height="1.6" fill="#5d4fa0"/><rect x="0.8" y="7.1" width="1.6" height="0.9" fill="#5d4fa0"/><rect x="10.3" y="0.8" width="0.9" height="1.6" fill="#5d4fa0"/><rect x="0.8" y="9.7" width="1.6" height="0.9" fill="#5d4fa0"/><rect x="13.2" y="0.8" width="0.9" height="1.6" fill="#5d4fa0"/><rect x="0.8" y="12.3" width="1.6" height="0.9" fill="#5d4fa0"/><rect x="16.1" y="0.8" width="0.9" height="1.6" fill="#5d4fa0"/><rect x="0.8" y="14.9" width="1.6" height="0.9" fill="#5d4fa0"/><circle cx="10.5" cy="11" r="5.6" stroke="#cdcdcd" stroke-width="1.2" fill="none" stroke-linecap="round" stroke-linejoin="round"/><path d="M7 11 H14" stroke="#cdcdcd" stroke-width="1.2" fill="none" stroke-linecap="round" stroke-linejoin="round"/><path d="M6.5 11 L8.5 9.5 V12.5 Z M14.5 11 L12.5 9.5 V12.5 Z" fill="#cdcdcd"/></svg>
<svg style="position:absolute;left:764.0px;top:5.0px;" width="18" height="18" viewBox="0 0 18 18"><path d="M2 2.5 H17 M2.5 2 V16.5" stroke="#5d4fa0" stroke-width="1" fill="none" opacity="0.9"/><rect x="4.5" y="0.8" width="0.9" height="1.6" fill="#5d4fa0"/><rect x="0.8" y="4.5" width="1.6" height="0.9" fill="#5d4fa0"/><rect x="7.4" y="0.8" width="0.9" height="1.6" fill="#5d4fa0"/><rect x="0.8" y="7.1" width="1.6" height="0.9" fill="#5d4fa0"/><rect x="10.3" y="0.8" width="0.9" height="1.6" fill="#5d4fa0"/><rect x="0.8" y="9.7" width="1.6" height="0.9" fill="#5d4fa0"/><rect x="13.2" y="0.8" width="0.9" height="1.6" fill="#5d4fa0"/><rect x="0.8" y="12.3" width="1.6" height="0.9" fill="#5d4fa0"/><rect x="16.1" y="0.8" width="0.9" height="1.6" fill="#5d4fa0"/><rect x="0.8" y="14.9" width="1.6" height="0.9" fill="#5d4fa0"/><path d="M5 5 V16 H16 M5 10 Q10.5 10.5 11 16" stroke="#cdcdcd" stroke-width="1.2" fill="none" stroke-linecap="round" stroke-linejoin="round"/></svg>
<svg style="position:absolute;left:793.0px;top:5.0px;" width="18" height="18" viewBox="0 0 18 18"><path d="M2 2.5 H17 M2.5 2 V16.5" stroke="#5d4fa0" stroke-width="1" fill="none" opacity="0.9"/><rect x="4.5" y="0.8" width="0.9" height="1.6" fill="#5d4fa0"/><rect x="0.8" y="4.5" width="1.6" height="0.9" fill="#5d4fa0"/><rect x="7.4" y="0.8" width="0.9" height="1.6" fill="#5d4fa0"/><rect x="0.8" y="7.1" width="1.6" height="0.9" fill="#5d4fa0"/><rect x="10.3" y="0.8" width="0.9" height="1.6" fill="#5d4fa0"/><rect x="0.8" y="9.7" width="1.6" height="0.9" fill="#5d4fa0"/><rect x="13.2" y="0.8" width="0.9" height="1.6" fill="#5d4fa0"/><rect x="0.8" y="12.3" width="1.6" height="0.9" fill="#5d4fa0"/><rect x="16.1" y="0.8" width="0.9" height="1.6" fill="#5d4fa0"/><rect x="0.8" y="14.9" width="1.6" height="0.9" fill="#5d4fa0"/><circle cx="10.5" cy="11" r="5.6" stroke="#cdcdcd" stroke-width="1.2" fill="none" stroke-linecap="round" stroke-linejoin="round"/><path d="M10.5 11 H15" stroke="#cdcdcd" stroke-width="1.2" fill="none" stroke-linecap="round" stroke-linejoin="round"/><path d="M15.5 11 L13 9.5 V12.5 Z" fill="#cdcdcd"/></svg>
<svg style="position:absolute;left:821.9px;top:5.0px;" width="18" height="18" viewBox="0 0 18 18"><path d="M2 2.5 H17 M2.5 2 V16.5" stroke="#5d4fa0" stroke-width="1" fill="none" opacity="0.9"/><rect x="4.5" y="0.8" width="0.9" height="1.6" fill="#5d4fa0"/><rect x="0.8" y="4.5" width="1.6" height="0.9" fill="#5d4fa0"/><rect x="7.4" y="0.8" width="0.9" height="1.6" fill="#5d4fa0"/><rect x="0.8" y="7.1" width="1.6" height="0.9" fill="#5d4fa0"/><rect x="10.3" y="0.8" width="0.9" height="1.6" fill="#5d4fa0"/><rect x="0.8" y="9.7" width="1.6" height="0.9" fill="#5d4fa0"/><rect x="13.2" y="0.8" width="0.9" height="1.6" fill="#5d4fa0"/><rect x="0.8" y="12.3" width="1.6" height="0.9" fill="#5d4fa0"/><rect x="16.1" y="0.8" width="0.9" height="1.6" fill="#5d4fa0"/><rect x="0.8" y="14.9" width="1.6" height="0.9" fill="#5d4fa0"/><path d="M10.5 5 L16 8 V14 L10.5 17 L5 14 V8 Z M5 8 L16 14 M16 8 L5 14 M10.5 5 V17" stroke="#cdcdcd" stroke-width="1.1" fill="none" stroke-linecap="round" stroke-linejoin="round"/></svg>
<svg style="position:absolute;left:850.5px;top:5.0px;" width="18" height="18" viewBox="0 0 18 18"><path d="M2 2.5 H17 M2.5 2 V16.5" stroke="#5d4fa0" stroke-width="1" fill="none" opacity="0.9"/><rect x="4.5" y="0.8" width="0.9" height="1.6" fill="#5d4fa0"/><rect x="0.8" y="4.5" width="1.6" height="0.9" fill="#5d4fa0"/><rect x="7.4" y="0.8" width="0.9" height="1.6" fill="#5d4fa0"/><rect x="0.8" y="7.1" width="1.6" height="0.9" fill="#5d4fa0"/><rect x="10.3" y="0.8" width="0.9" height="1.6" fill="#5d4fa0"/><rect x="0.8" y="9.7" width="1.6" height="0.9" fill="#5d4fa0"/><rect x="13.2" y="0.8" width="0.9" height="1.6" fill="#5d4fa0"/><rect x="0.8" y="12.3" width="1.6" height="0.9" fill="#5d4fa0"/><rect x="16.1" y="0.8" width="0.9" height="1.6" fill="#5d4fa0"/><rect x="0.8" y="14.9" width="1.6" height="0.9" fill="#5d4fa0"/><path d="M7 8 V16 M9.5 8 V16 M12 8 V16 M14.5 8 V16 M5 13.5 L16.5 9" stroke="#cdcdcd" stroke-width="1.2" fill="none" stroke-linecap="round" stroke-linejoin="round"/></svg>
<div style="position:absolute;left:876.4px;top:5px;width:1px;height:17px;background:#4a4a4a"></div>
<svg style="position:absolute;left:883.7px;top:5.0px;" width="18" height="18" viewBox="0 0 18 18"><path d="M2 2.5 H17 M2.5 2 V16.5" stroke="#5d4fa0" stroke-width="1" fill="none" opacity="0.9"/><rect x="4.5" y="0.8" width="0.9" height="1.6" fill="#5d4fa0"/><rect x="0.8" y="4.5" width="1.6" height="0.9" fill="#5d4fa0"/><rect x="7.4" y="0.8" width="0.9" height="1.6" fill="#5d4fa0"/><rect x="0.8" y="7.1" width="1.6" height="0.9" fill="#5d4fa0"/><rect x="10.3" y="0.8" width="0.9" height="1.6" fill="#5d4fa0"/><rect x="0.8" y="9.7" width="1.6" height="0.9" fill="#5d4fa0"/><rect x="13.2" y="0.8" width="0.9" height="1.6" fill="#5d4fa0"/><rect x="0.8" y="12.3" width="1.6" height="0.9" fill="#5d4fa0"/><rect x="16.1" y="0.8" width="0.9" height="1.6" fill="#5d4fa0"/><rect x="0.8" y="14.9" width="1.6" height="0.9" fill="#5d4fa0"/><path d="M5 16 V11 L10 6 H16 V16 Z" stroke="#cdcdcd" stroke-width="1.2" fill="none" stroke-linecap="round" stroke-linejoin="round"/><path d="M12 11 H14 V13" stroke="#cdcdcd" stroke-width="0.9" fill="none" stroke-dasharray="1 1"/></svg>
<svg style="position:absolute;left:912.8px;top:5.0px;" width="18" height="18" viewBox="0 0 18 18"><path d="M2 2.5 H17 M2.5 2 V16.5" stroke="#5d4fa0" stroke-width="1" fill="none" opacity="0.9"/><rect x="4.5" y="0.8" width="0.9" height="1.6" fill="#5d4fa0"/><rect x="0.8" y="4.5" width="1.6" height="0.9" fill="#5d4fa0"/><rect x="7.4" y="0.8" width="0.9" height="1.6" fill="#5d4fa0"/><rect x="0.8" y="7.1" width="1.6" height="0.9" fill="#5d4fa0"/><rect x="10.3" y="0.8" width="0.9" height="1.6" fill="#5d4fa0"/><rect x="0.8" y="9.7" width="1.6" height="0.9" fill="#5d4fa0"/><rect x="13.2" y="0.8" width="0.9" height="1.6" fill="#5d4fa0"/><rect x="0.8" y="12.3" width="1.6" height="0.9" fill="#5d4fa0"/><rect x="16.1" y="0.8" width="0.9" height="1.6" fill="#5d4fa0"/><rect x="0.8" y="14.9" width="1.6" height="0.9" fill="#5d4fa0"/><path d="M5 16 V11 L10 6 H16 V16 Z" stroke="#cdcdcd" stroke-width="1.2" fill="none" stroke-linecap="round" stroke-linejoin="round"/><path d="M8 14 L12 10 H14" stroke="#cdcdcd" stroke-width="0.9" fill="none" stroke-dasharray="1 1"/></svg>
<svg style="position:absolute;left:941.8px;top:5.0px;" width="18" height="18" viewBox="0 0 18 18"><path d="M2 2.5 H17 M2.5 2 V16.5" stroke="#5d4fa0" stroke-width="1" fill="none" opacity="0.9"/><rect x="4.5" y="0.8" width="0.9" height="1.6" fill="#5d4fa0"/><rect x="0.8" y="4.5" width="1.6" height="0.9" fill="#5d4fa0"/><rect x="7.4" y="0.8" width="0.9" height="1.6" fill="#5d4fa0"/><rect x="0.8" y="7.1" width="1.6" height="0.9" fill="#5d4fa0"/><rect x="10.3" y="0.8" width="0.9" height="1.6" fill="#5d4fa0"/><rect x="0.8" y="9.7" width="1.6" height="0.9" fill="#5d4fa0"/><rect x="13.2" y="0.8" width="0.9" height="1.6" fill="#5d4fa0"/><rect x="0.8" y="12.3" width="1.6" height="0.9" fill="#5d4fa0"/><rect x="16.1" y="0.8" width="0.9" height="1.6" fill="#5d4fa0"/><rect x="0.8" y="14.9" width="1.6" height="0.9" fill="#5d4fa0"/><path d="M5 6 V16 H16 V6 M5 11 H16" stroke="#cdcdcd" stroke-width="1.2" fill="none" stroke-linecap="round" stroke-linejoin="round"/></svg>
<svg style="position:absolute;left:0px;top:3px;" width="1536" height="22" viewBox="0 0 1536 22"><rect x="969.40" y="0.00" width="1.6" height="1.6" fill="#8c8c8c"/><rect x="969.40" y="3.20" width="1.6" height="1.6" fill="#8c8c8c"/><rect x="969.40" y="6.40" width="1.6" height="1.6" fill="#8c8c8c"/><rect x="969.40" y="9.60" width="1.6" height="1.6" fill="#8c8c8c"/><rect x="969.40" y="12.80" width="1.6" height="1.6" fill="#8c8c8c"/><rect x="969.40" y="16.00" width="1.6" height="1.6" fill="#8c8c8c"/><rect x="969.40" y="19.20" width="1.6" height="1.6" fill="#8c8c8c"/></svg>
<svg style="position:absolute;left:979.0px;top:5.0px;" width="18" height="18" viewBox="0 0 18 18"><path d="M2 2.5 H17 M2.5 2 V16.5" stroke="#d26a1c" stroke-width="1" fill="none" opacity="0.9"/><rect x="4.5" y="0.8" width="0.9" height="1.6" fill="#d26a1c"/><rect x="0.8" y="4.5" width="1.6" height="0.9" fill="#d26a1c"/><rect x="7.4" y="0.8" width="0.9" height="1.6" fill="#d26a1c"/><rect x="0.8" y="7.1" width="1.6" height="0.9" fill="#d26a1c"/><rect x="10.3" y="0.8" width="0.9" height="1.6" fill="#d26a1c"/><rect x="0.8" y="9.7" width="1.6" height="0.9" fill="#d26a1c"/><rect x="13.2" y="0.8" width="0.9" height="1.6" fill="#d26a1c"/><rect x="0.8" y="12.3" width="1.6" height="0.9" fill="#d26a1c"/><rect x="16.1" y="0.8" width="0.9" height="1.6" fill="#d26a1c"/><rect x="0.8" y="14.9" width="1.6" height="0.9" fill="#d26a1c"/><path d="M6 6 H15 L11.5 11 L15.5 16 H6 Z" stroke="#cdcdcd" stroke-width="1.2" fill="none" stroke-linecap="round" stroke-linejoin="round"/></svg>
<svg style="position:absolute;left:1007.8px;top:5.0px;" width="18" height="18" viewBox="0 0 18 18"><path d="M2 2.5 H17 M2.5 2 V16.5" stroke="#d26a1c" stroke-width="1" fill="none" opacity="0.9"/><rect x="4.5" y="0.8" width="0.9" height="1.6" fill="#d26a1c"/><rect x="0.8" y="4.5" width="1.6" height="0.9" fill="#d26a1c"/><rect x="7.4" y="0.8" width="0.9" height="1.6" fill="#d26a1c"/><rect x="0.8" y="7.1" width="1.6" height="0.9" fill="#d26a1c"/><rect x="10.3" y="0.8" width="0.9" height="1.6" fill="#d26a1c"/><rect x="0.8" y="9.7" width="1.6" height="0.9" fill="#d26a1c"/><rect x="13.2" y="0.8" width="0.9" height="1.6" fill="#d26a1c"/><rect x="0.8" y="12.3" width="1.6" height="0.9" fill="#d26a1c"/><rect x="16.1" y="0.8" width="0.9" height="1.6" fill="#d26a1c"/><rect x="0.8" y="14.9" width="1.6" height="0.9" fill="#d26a1c"/><rect x="6" y="7" width="10" height="8" stroke="#cdcdcd" stroke-width="1.2" fill="none" stroke-linecap="round" stroke-linejoin="round"/></svg>
<svg style="position:absolute;left:1036.8px;top:5.0px;" width="18" height="18" viewBox="0 0 18 18"><path d="M2 2.5 H17 M2.5 2 V16.5" stroke="#d26a1c" stroke-width="1" fill="none" opacity="0.9"/><rect x="4.5" y="0.8" width="0.9" height="1.6" fill="#d26a1c"/><rect x="0.8" y="4.5" width="1.6" height="0.9" fill="#d26a1c"/><rect x="7.4" y="0.8" width="0.9" height="1.6" fill="#d26a1c"/><rect x="0.8" y="7.1" width="1.6" height="0.9" fill="#d26a1c"/><rect x="10.3" y="0.8" width="0.9" height="1.6" fill="#d26a1c"/><rect x="0.8" y="9.7" width="1.6" height="0.9" fill="#d26a1c"/><rect x="13.2" y="0.8" width="0.9" height="1.6" fill="#d26a1c"/><rect x="0.8" y="12.3" width="1.6" height="0.9" fill="#d26a1c"/><rect x="16.1" y="0.8" width="0.9" height="1.6" fill="#d26a1c"/><rect x="0.8" y="14.9" width="1.6" height="0.9" fill="#d26a1c"/><ellipse cx="11" cy="11" rx="5.5" ry="4" stroke="#cdcdcd" stroke-width="1.2" fill="none" stroke-linecap="round" stroke-linejoin="round"/></svg>
<svg style="position:absolute;left:1065.5px;top:5.0px;" width="18" height="18" viewBox="0 0 18 18"><path d="M2 2.5 H17 M2.5 2 V16.5" stroke="#d26a1c" stroke-width="1" fill="none" opacity="0.9"/><rect x="4.5" y="0.8" width="0.9" height="1.6" fill="#d26a1c"/><rect x="0.8" y="4.5" width="1.6" height="0.9" fill="#d26a1c"/><rect x="7.4" y="0.8" width="0.9" height="1.6" fill="#d26a1c"/><rect x="0.8" y="7.1" width="1.6" height="0.9" fill="#d26a1c"/><rect x="10.3" y="0.8" width="0.9" height="1.6" fill="#d26a1c"/><rect x="0.8" y="9.7" width="1.6" height="0.9" fill="#d26a1c"/><rect x="13.2" y="0.8" width="0.9" height="1.6" fill="#d26a1c"/><rect x="0.8" y="12.3" width="1.6" height="0.9" fill="#d26a1c"/><rect x="16.1" y="0.8" width="0.9" height="1.6" fill="#d26a1c"/><rect x="0.8" y="14.9" width="1.6" height="0.9" fill="#d26a1c"/><path d="M5.5 16 L6.5 12 L8.5 13.5 L10 9 L12 10 L16 6" stroke="#cdcdcd" stroke-width="1.2" fill="none" stroke-linecap="round" stroke-linejoin="round"/></svg>
<svg style="position:absolute;left:0px;top:3px;" width="1536" height="22" viewBox="0 0 1536 22"><rect x="1093.40" y="0.00" width="1.6" height="1.6" fill="#8c8c8c"/><rect x="1093.40" y="3.20" width="1.6" height="1.6" fill="#8c8c8c"/><rect x="1093.40" y="6.40" width="1.6" height="1.6" fill="#8c8c8c"/><rect x="1093.40" y="9.60" width="1.6" height="1.6" fill="#8c8c8c"/><rect x="1093.40" y="12.80" width="1.6" height="1.6" fill="#8c8c8c"/><rect x="1093.40" y="16.00" width="1.6" height="1.6" fill="#8c8c8c"/><rect x="1093.40" y="19.20" width="1.6" height="1.6" fill="#8c8c8c"/></svg>
<div class="t" style="left:1104.5px;top:7.5px;font-size:11px;color:#c4c4c4;font-weight:normal;">A</div>
<div class="t" style="left:1114.5px;top:7.5px;font-size:11px;color:#c4c4c4;font-weight:normal;">B</div>
<svg style="position:absolute;left:1103.4px;top:4.5px;" width="18" height="18" viewBox="0 0 18 18"><path d="M9 2 V16 M7.5 2 H10.5 M7.5 16 H10.5" stroke="#cdcdcd" stroke-width="1.1" fill="none" stroke-linecap="round" stroke-linejoin="round"/></svg>
<div style="position:absolute;left:1129.5px;top:6px;width:1px;height:16px;background:#555"></div>
<svg style="position:absolute;left:1137.2px;top:4.5px;" width="18" height="18" viewBox="0 0 18 18"><path d="M4 3 H14 M9 3 V15" stroke="#dcdcdc" stroke-width="1.7" fill="none" stroke-linecap="round" stroke-linejoin="round"/><path d="M4 10.5 H14" stroke="#c9a53a" stroke-width="1" fill="none" stroke-linecap="round" stroke-linejoin="round"/><path d="M10.5 17 L12.5 15 L14.5 17" stroke="#c9a53a" stroke-width="1.1" fill="none" stroke-linecap="round" stroke-linejoin="round"/></svg>
<div style="position:absolute;left:1163px;top:6px;width:1px;height:16px;background:#555"></div>
<svg style="position:absolute;left:1170.4px;top:4.5px;" width="18" height="18" viewBox="0 0 18 18"><path d="M4 3 H14 M9 3 V14" stroke="#dcdcdc" stroke-width="1.7" fill="none" stroke-linecap="round" stroke-linejoin="round"/><path d="M3.5 17 H14.5" stroke="#c9a53a" stroke-width="1" fill="none" stroke-linecap="round" stroke-linejoin="round"/></svg>
<svg style="position:absolute;left:1199.0px;top:4.5px;" width="18" height="18" viewBox="0 0 18 18"><path d="M4 3 H14 M9 3 V14" stroke="#dcdcdc" stroke-width="1.7" fill="none" stroke-linecap="round" stroke-linejoin="round"/><path d="M3 17 Q4 15.8 5 17 T7 17 T9 17 T11 17 T13 17 T15 17" stroke="#c9a53a" stroke-width="1" fill="none" stroke-linecap="round" stroke-linejoin="round"/></svg>
<svg style="position:absolute;left:1227.7px;top:4.5px;" width="18" height="18" viewBox="0 0 18 18"><path d="M4 3 H14 M9 3 V15" stroke="#dcdcdc" stroke-width="1.7" fill="none" stroke-linecap="round" stroke-linejoin="round"/><path d="M3.5 10 H14.5" stroke="#c9a53a" stroke-width="1" fill="none" stroke-linecap="round" stroke-linejoin="round"/></svg>
<svg style="position:absolute;left:0px;top:3px;" width="1536" height="22" viewBox="0 0 1536 22"><rect x="1255.40" y="0.00" width="1.6" height="1.6" fill="#8c8c8c"/><rect x="1255.40" y="3.20" width="1.6" height="1.6" fill="#8c8c8c"/><rect x="1255.40" y="6.40" width="1.6" height="1.6" fill="#8c8c8c"/><rect x="1255.40" y="9.60" width="1.6" height="1.6" fill="#8c8c8c"/><rect x="1255.40" y="12.80" width="1.6" height="1.6" fill="#8c8c8c"/><rect x="1255.40" y="16.00" width="1.6" height="1.6" fill="#8c8c8c"/><rect x="1255.40" y="19.20" width="1.6" height="1.6" fill="#8c8c8c"/></svg>
<svg style="position:absolute;left:1265.0px;top:4.5px;" width="18" height="18" viewBox="0 0 18 18"><path d="M4 3 V14 L7 11 L13 11 Z" stroke="#5c5c5c" stroke-width="1.1" fill="none" stroke-linecap="round" stroke-linejoin="round"/><path d="M11 15 H16 M13.5 12.5 V17.5" stroke="#5c5c5c" stroke-width="1.1" fill="none" stroke-linecap="round" stroke-linejoin="round"/></svg>
<svg style="position:absolute;left:1293.5px;top:4.5px;" width="18" height="18" viewBox="0 0 18 18"><path d="M4 3 V14 L7 11 L13 11 Z" stroke="#5c5c5c" stroke-width="1.1" fill="none" stroke-linecap="round" stroke-linejoin="round"/><path d="M11 16 H16" stroke="#5c5c5c" stroke-width="1.1" fill="none" stroke-linecap="round" stroke-linejoin="round"/></svg>
<svg style="position:absolute;left:1322.5px;top:4.5px;" width="18" height="18" viewBox="0 0 18 18"><path d="M4 3 V14 L7 11 L13 11 Z" stroke="#5c5c5c" stroke-width="1.1" fill="none" stroke-linecap="round" stroke-linejoin="round"/><path d="M12 17 Q12.5 14 15.5 13.5" stroke="#4a4a4a" stroke-width="1.1" fill="none" stroke-linecap="round" stroke-linejoin="round"/></svg>
<svg style="position:absolute;left:1351.5px;top:4.5px;" width="18" height="18" viewBox="0 0 18 18"><circle cx="7.5" cy="7.5" r="5.5" stroke="#cdcdcd" stroke-width="1.3" fill="none" stroke-linecap="round" stroke-linejoin="round"/><path d="M11.5 11.5 L16 16 M5 7.5 H10 M7.5 5 V10" stroke="#cdcdcd" stroke-width="1.3" fill="none" stroke-linecap="round" stroke-linejoin="round"/></svg>
<svg style="position:absolute;left:1380.5px;top:4.5px;" width="18" height="18" viewBox="0 0 18 18"><circle cx="7.5" cy="7.5" r="5.5" stroke="#cdcdcd" stroke-width="1.3" fill="none" stroke-linecap="round" stroke-linejoin="round"/><path d="M11.5 11.5 L16 16 M5 7.5 H10" stroke="#cdcdcd" stroke-width="1.3" fill="none" stroke-linecap="round" stroke-linejoin="round"/></svg>
<svg style="position:absolute;left:0px;top:3px;" width="1536" height="22" viewBox="0 0 1536 22"><rect x="1408.40" y="0.00" width="1.6" height="1.6" fill="#8c8c8c"/><rect x="1408.40" y="3.20" width="1.6" height="1.6" fill="#8c8c8c"/><rect x="1408.40" y="6.40" width="1.6" height="1.6" fill="#8c8c8c"/><rect x="1408.40" y="9.60" width="1.6" height="1.6" fill="#8c8c8c"/><rect x="1408.40" y="12.80" width="1.6" height="1.6" fill="#8c8c8c"/><rect x="1408.40" y="16.00" width="1.6" height="1.6" fill="#8c8c8c"/><rect x="1408.40" y="19.20" width="1.6" height="1.6" fill="#8c8c8c"/></svg>
<svg style="position:absolute;left:1418.5px;top:4.5px;" width="18" height="18" viewBox="0 0 18 18"><path d="M3 15 Q2 9 6 7.5 L13 2 L15.5 4.5 L9.5 11 Q13 11 14 13 Q14.5 16 10 16 Q6 16.5 3 15 Z M5 16 L8.5 12" stroke="#cdcdcd" stroke-width="1.1" fill="none" stroke-linecap="round" stroke-linejoin="round"/></svg>
<svg style="position:absolute;left:1446.6px;top:4.5px;" width="18" height="18" viewBox="0 0 18 18"><path d="M7 11.5 L14 4.5 L16 6.5 L9 13.5 L6.5 14 Z M2 14.5 H16" stroke="#cdcdcd" stroke-width="1.2" fill="none" stroke-linecap="round" stroke-linejoin="round"/><path d="M2 9.5 L4.5 12 M4.5 9.5 L2 12" stroke="#cdcdcd" stroke-width="1.1" fill="none" stroke-linecap="round" stroke-linejoin="round"/></svg>
<svg style="position:absolute;left:0px;top:31.5px;" width="1536" height="22.5" viewBox="0 0 1536 22.5"><rect x="5.10" y="0.00" width="1.6" height="1.6" fill="#8c8c8c"/><rect x="5.10" y="3.20" width="1.6" height="1.6" fill="#8c8c8c"/><rect x="5.10" y="6.40" width="1.6" height="1.6" fill="#8c8c8c"/><rect x="5.10" y="9.60" width="1.6" height="1.6" fill="#8c8c8c"/><rect x="5.10" y="12.80" width="1.6" height="1.6" fill="#8c8c8c"/><rect x="5.10" y="16.00" width="1.6" height="1.6" fill="#8c8c8c"/><rect x="5.10" y="19.20" width="1.6" height="1.6" fill="#8c8c8c"/></svg>
<div style="position:absolute;left:11.5px;top:34px;width:75.5px;height:20px;border:1px solid #5e5e5e;border-radius:3px;background:transparent"></div>
<div style="position:absolute;left:74px;top:35px;width:1px;height:20px;background:#5e5e5e"></div>
<svg style="position:absolute;left:76.5px;top:41px;" width="10" height="8" viewBox="0 0 10 8"><path d="M1.5 2.25 L5 5.75 L8.5 2.25" stroke="#aaa" stroke-width="1.1" fill="none" stroke-linecap="round" stroke-linejoin="round"/></svg>
<div style="position:absolute;left:91.5px;top:34px;width:75.0px;height:20px;border:1px solid #5e5e5e;border-radius:3px;background:transparent"></div>
<div style="position:absolute;left:153.5px;top:35px;width:1px;height:20px;background:#5e5e5e"></div>
<div class="t" style="left:98px;top:39.5px;font-size:12.5px;color:#e6e6e6;font-weight:normal;">12</div>
<svg style="position:absolute;left:156px;top:41px;" width="10" height="8" viewBox="0 0 10 8"><path d="M1.5 2.25 L5 5.75 L8.5 2.25" stroke="#aaa" stroke-width="1.1" fill="none" stroke-linecap="round" stroke-linejoin="round"/></svg>
<div style="position:absolute;left:172.5px;top:36px;width:1px;height:18px;background:#555"></div>
<svg style="position:absolute;left:179.5px;top:35.5px;" width="18" height="18" viewBox="0 0 18 18"><path d="M5 11 L9 1.5 L13 11 M6.5 7.5 H11.5" stroke="#cdcdcd" stroke-width="1.3" fill="none" stroke-linecap="round" stroke-linejoin="round"/><rect x="1.5" y="12.2" width="15" height="2.2" fill="#e03a24"/><rect x="1.5" y="14.4" width="15" height="1.6" fill="#f0f0f0"/></svg>
<svg style="position:absolute;left:198.5px;top:41px;" width="10" height="8" viewBox="0 0 10 8"><path d="M1.5 2.25 L5 5.75 L8.5 2.25" stroke="#aaa" stroke-width="1.1" fill="none" stroke-linecap="round" stroke-linejoin="round"/></svg>
<div style="position:absolute;left:213px;top:36px;width:1px;height:18px;background:#555"></div>
<div class="t" style="left:224px;top:38.5px;font-size:13px;color:#e8e8e8;font-weight:bold;">B</div>
<div class="t" style="left:254.5px;top:38.5px;font-size:13px;color:#e8e8e8;font-weight:normal;font-style:italic;font-weight:bold">I</div>
<svg style="position:absolute;left:277.5px;top:35.5px;" width="18" height="18" viewBox="0 0 18 18"><path d="M3.5 2.5 H13.5 M8.5 2.5 V13.5" stroke="#e8e8e8" stroke-width="2" fill="none" stroke-linecap="round" stroke-linejoin="round"/><path d="M3 16.5 H14" stroke="#c9a53a" stroke-width="1.1" fill="none" stroke-linecap="round" stroke-linejoin="round"/></svg>
<svg style="position:absolute;left:306.6px;top:35.5px;" width="18" height="18" viewBox="0 0 18 18"><path d="M3.5 2.5 H13.5 M8.5 2.5 V14.5" stroke="#e8e8e8" stroke-width="2" fill="none" stroke-linecap="round" stroke-linejoin="round"/><path d="M3 9.5 H14" stroke="#c9a53a" stroke-width="1.1" fill="none" stroke-linecap="round" stroke-linejoin="round"/></svg>
<div style="position:absolute;left:333px;top:36px;width:1px;height:18px;background:#555"></div>
<svg style="position:absolute;left:340.0px;top:35.5px;" width="18" height="18" viewBox="0 0 18 18"><path d="M2.5 4 H14.5 M2.5 6.6 H11 M2.5 9.2 H14.5 M2.5 11.8 H10 M2.5 14.4 H13" stroke="#5a5a5a" stroke-width="1" fill="none" stroke-linecap="round" stroke-linejoin="round"/></svg>
<svg style="position:absolute;left:369.0px;top:35.5px;" width="18" height="18" viewBox="0 0 18 18"><path d="M2.5 4 H14.5 M4.5 6.6 H12.5 M2.5 9.2 H14.5 M5 11.8 H12 M3.5 14.4 H13.5" stroke="#5a5a5a" stroke-width="1" fill="none" stroke-linecap="round" stroke-linejoin="round"/></svg>
<svg style="position:absolute;left:398.0px;top:35.5px;" width="18" height="18" viewBox="0 0 18 18"><path d="M2.5 4 H14.5 M6 6.6 H14.5 M2.5 9.2 H14.5 M7 11.8 H14.5 M4 14.4 H14.5" stroke="#5a5a5a" stroke-width="1" fill="none" stroke-linecap="round" stroke-linejoin="round"/></svg>
<svg style="position:absolute;left:0px;top:31.5px;" width="1536" height="22.5" viewBox="0 0 1536 22.5"><rect x="425.40" y="0.00" width="1.6" height="1.6" fill="#8c8c8c"/><rect x="425.40" y="3.20" width="1.6" height="1.6" fill="#8c8c8c"/><rect x="425.40" y="6.40" width="1.6" height="1.6" fill="#8c8c8c"/><rect x="425.40" y="9.60" width="1.6" height="1.6" fill="#8c8c8c"/><rect x="425.40" y="12.80" width="1.6" height="1.6" fill="#8c8c8c"/><rect x="425.40" y="16.00" width="1.6" height="1.6" fill="#8c8c8c"/><rect x="425.40" y="19.20" width="1.6" height="1.6" fill="#8c8c8c"/></svg>
<svg style="position:absolute;left:436px;top:34px;" width="56" height="18" viewBox="0 0 56 18"><path d="M4 9 H52" stroke="#e6e6e6" stroke-width="1.7" fill="none" stroke-linecap="round" stroke-linejoin="round"/><path d="M7.5 5.3 L3.5 9 L7.5 12.7 M48.5 5.3 L52.5 9 L48.5 12.7" stroke="#e6e6e6" stroke-width="1.7" fill="none" stroke-linecap="round" stroke-linejoin="round"/></svg>
<svg style="position:absolute;left:502px;top:34px;" width="20" height="18" viewBox="0 0 20 18"><path d="M6 9 H17" stroke="#cfcfcf" stroke-width="1.8" fill="none" stroke-linecap="round" stroke-linejoin="round"/><path d="M2 9 L7 5.5 V12.5 Z" fill="#e6e6e6"/></svg>
<svg style="position:absolute;left:520.5px;top:39px;" width="10" height="8" viewBox="0 0 10 8"><path d="M1.5 2.25 L5 5.75 L8.5 2.25" stroke="#aaa" stroke-width="1.1" fill="none" stroke-linecap="round" stroke-linejoin="round"/></svg>
<svg style="position:absolute;left:538px;top:34px;" width="20" height="18" viewBox="0 0 20 18"><path d="M2 9 H13" stroke="#cfcfcf" stroke-width="1.8" fill="none" stroke-linecap="round" stroke-linejoin="round"/><path d="M18 9 L13 5.5 V12.5 Z" fill="#e6e6e6"/></svg>
<svg style="position:absolute;left:558px;top:39px;" width="10" height="8" viewBox="0 0 10 8"><path d="M1.5 2.25 L5 5.75 L8.5 2.25" stroke="#aaa" stroke-width="1.1" fill="none" stroke-linecap="round" stroke-linejoin="round"/></svg>
<svg style="position:absolute;left:574.5px;top:33.5px;" width="18" height="18" viewBox="0 0 18 18"><path d="M1 2.5 H16" stroke="#cdcdcd" stroke-width="1.2" fill="none" stroke-linecap="round" stroke-linejoin="round"/><path d="M1 5.5 H16 M1 8 H16" stroke="#cdcdcd" stroke-width="1" stroke-dasharray="1.5 1.2" fill="none"/><path d="M1 11 H16" stroke="#cdcdcd" stroke-width="1.3" fill="none" stroke-linecap="round" stroke-linejoin="round"/><path d="M1 15 Q3 13 5 15 T9 15 T13 15 T17 15" stroke="#cdcdcd" stroke-width="1.2" fill="none" stroke-linecap="round" stroke-linejoin="round"/></svg>
<svg style="position:absolute;left:592.5px;top:39px;" width="10" height="8" viewBox="0 0 10 8"><path d="M1.5 2.25 L5 5.75 L8.5 2.25" stroke="#aaa" stroke-width="1.1" fill="none" stroke-linecap="round" stroke-linejoin="round"/></svg>
<svg style="position:absolute;left:0px;top:31.5px;" width="1536" height="22.5" viewBox="0 0 1536 22.5"><rect x="609.40" y="0.00" width="1.6" height="1.6" fill="#8c8c8c"/><rect x="609.40" y="3.20" width="1.6" height="1.6" fill="#8c8c8c"/><rect x="609.40" y="6.40" width="1.6" height="1.6" fill="#8c8c8c"/><rect x="609.40" y="9.60" width="1.6" height="1.6" fill="#8c8c8c"/><rect x="609.40" y="12.80" width="1.6" height="1.6" fill="#8c8c8c"/><rect x="609.40" y="16.00" width="1.6" height="1.6" fill="#8c8c8c"/><rect x="609.40" y="19.20" width="1.6" height="1.6" fill="#8c8c8c"/></svg>
<svg style="position:absolute;left:619.4px;top:33.5px;" width="18" height="18" viewBox="0 0 18 18"><rect x="2.5" y="2.5" width="8" height="8" stroke="#cdcdcd" stroke-width="1.1" fill="none" stroke-linecap="round" stroke-linejoin="round"/><rect x="4.5" y="4.5" width="8.5" height="8.5" stroke="#cdcdcd" stroke-width="1.6" fill="none" stroke-linecap="round" stroke-linejoin="round"/><path d="M13 8 H15.5 V15.5 H8 V13" stroke="#cdcdcd" stroke-width="1.1" fill="none" stroke-linecap="round" stroke-linejoin="round"/></svg>
<svg style="position:absolute;left:648.4px;top:33.5px;" width="18" height="18" viewBox="0 0 18 18"><rect x="2.5" y="2.5" width="5.5" height="5.5" stroke="#cdcdcd" stroke-width="1.5" fill="none" stroke-linecap="round" stroke-linejoin="round"/><path d="M8 4.5 H11 V10 M4.5 8 V12 H9" stroke="#cdcdcd" stroke-width="1.1" fill="none" stroke-linecap="round" stroke-linejoin="round"/><rect x="9.5" y="10" width="6" height="6" stroke="#cdcdcd" stroke-width="1.5" fill="none" stroke-linecap="round" stroke-linejoin="round"/></svg>
<svg style="position:absolute;left:677.0px;top:33.5px;" width="18" height="18" viewBox="0 0 18 18"><rect x="2.5" y="2.5" width="10.5" height="10.5" stroke="#cdcdcd" stroke-width="1.5" fill="none" stroke-linecap="round" stroke-linejoin="round"/><path d="M13 10 H15.5 V15.5 H8 V13" stroke="#cdcdcd" stroke-width="1.1" fill="none" stroke-linecap="round" stroke-linejoin="round"/></svg>
<svg style="position:absolute;left:705.7px;top:33.5px;" width="18" height="18" viewBox="0 0 18 18"><rect x="2.5" y="2.5" width="10.5" height="10.5" stroke="#cdcdcd" stroke-width="1.3" fill="none" stroke-linecap="round" stroke-linejoin="round"/><rect x="9.5" y="9.5" width="6.5" height="6.5" fill="#282828" stroke="#cdcdcd" stroke-width="1.5" fill="none" stroke-linecap="round" stroke-linejoin="round"/></svg>
<svg style="position:absolute;left:0px;top:31.5px;" width="1536" height="22.5" viewBox="0 0 1536 22.5"><rect x="733.60" y="0.00" width="1.6" height="1.6" fill="#8c8c8c"/><rect x="733.60" y="3.20" width="1.6" height="1.6" fill="#8c8c8c"/><rect x="733.60" y="6.40" width="1.6" height="1.6" fill="#8c8c8c"/><rect x="733.60" y="9.60" width="1.6" height="1.6" fill="#8c8c8c"/><rect x="733.60" y="12.80" width="1.6" height="1.6" fill="#8c8c8c"/><rect x="733.60" y="16.00" width="1.6" height="1.6" fill="#8c8c8c"/><rect x="733.60" y="19.20" width="1.6" height="1.6" fill="#8c8c8c"/></svg>
<svg style="position:absolute;left:743.7px;top:33.5px;" width="18" height="18" viewBox="0 0 18 18"><g transform="translate(9.0 9.0) scale(0.86) translate(-9.0 -9.0)"><path d="M2.5 1.5 V17" stroke="#5c5c5c" stroke-width="1" fill="none" stroke-linecap="round" stroke-linejoin="round"/><rect x="3.5" y="4" width="5.5" height="4" stroke="#5c5c5c" stroke-width="1" fill="none" stroke-linecap="round" stroke-linejoin="round"/><rect x="3.5" y="11" width="11.5" height="4" stroke="#5c5c5c" stroke-width="1" fill="none" stroke-linecap="round" stroke-linejoin="round"/></g></svg>
<svg style="position:absolute;left:771.8px;top:33.5px;" width="18" height="18" viewBox="0 0 18 18"><g transform="translate(9.0 9.0) scale(0.86) translate(-9.0 -9.0)"><path d="M9 1 V17" stroke="#5c5c5c" stroke-width="1" fill="none" stroke-linecap="round" stroke-linejoin="round"/><rect x="6" y="4" width="6" height="4" stroke="#5c5c5c" stroke-width="1" fill="none" stroke-linecap="round" stroke-linejoin="round"/><rect x="3" y="10.5" width="12" height="4" stroke="#5c5c5c" stroke-width="1" fill="none" stroke-linecap="round" stroke-linejoin="round"/></g></svg>
<svg style="position:absolute;left:801.0px;top:33.5px;" width="18" height="18" viewBox="0 0 18 18"><g transform="translate(9.0 9.0) scale(0.86) translate(-9.0 -9.0)"><path d="M15.5 1.5 V17" stroke="#5c5c5c" stroke-width="1" fill="none" stroke-linecap="round" stroke-linejoin="round"/><rect x="9" y="4" width="5.5" height="4" stroke="#5c5c5c" stroke-width="1" fill="none" stroke-linecap="round" stroke-linejoin="round"/><rect x="3" y="11" width="11.5" height="4" stroke="#5c5c5c" stroke-width="1" fill="none" stroke-linecap="round" stroke-linejoin="round"/></g></svg>
<div style="position:absolute;left:827.3px;top:35px;width:1px;height:16px;background:#555"></div>
<svg style="position:absolute;left:834.3px;top:33.5px;" width="18" height="18" viewBox="0 0 18 18"><g transform="translate(9.0 9.0) scale(0.86) translate(-9.0 -9.0)"><path d="M1.5 2 H16.5" stroke="#5c5c5c" stroke-width="1" fill="none" stroke-linecap="round" stroke-linejoin="round"/><rect x="3" y="3" width="4" height="12" stroke="#5c5c5c" stroke-width="1" fill="none" stroke-linecap="round" stroke-linejoin="round"/><rect x="10" y="3" width="4" height="5" stroke="#5c5c5c" stroke-width="1" fill="none" stroke-linecap="round" stroke-linejoin="round"/></g></svg>
<svg style="position:absolute;left:863.0px;top:33.5px;" width="18" height="18" viewBox="0 0 18 18"><g transform="translate(9.0 9.0) scale(0.86) translate(-9.0 -9.0)"><path d="M1.5 9 H16.5" stroke="#5c5c5c" stroke-width="1" fill="none" stroke-linecap="round" stroke-linejoin="round"/><rect x="3.5" y="2.5" width="4" height="13" stroke="#5c5c5c" stroke-width="1" fill="none" stroke-linecap="round" stroke-linejoin="round"/><rect x="10" y="5.5" width="4" height="6.5" stroke="#5c5c5c" stroke-width="1" fill="none" stroke-linecap="round" stroke-linejoin="round"/></g></svg>
<svg style="position:absolute;left:892.0px;top:33.5px;" width="18" height="18" viewBox="0 0 18 18"><g transform="translate(9.0 9.0) scale(0.86) translate(-9.0 -9.0)"><path d="M1.5 16 H16.5" stroke="#5c5c5c" stroke-width="1" fill="none" stroke-linecap="round" stroke-linejoin="round"/><rect x="3.5" y="2.5" width="4" height="12.5" stroke="#5c5c5c" stroke-width="1" fill="none" stroke-linecap="round" stroke-linejoin="round"/><rect x="10" y="9" width="4" height="6" stroke="#5c5c5c" stroke-width="1" fill="none" stroke-linecap="round" stroke-linejoin="round"/></g></svg>
<div style="position:absolute;left:918.5px;top:35px;width:1px;height:16px;background:#555"></div>
<svg style="position:absolute;left:925.5px;top:33.5px;" width="18" height="18" viewBox="0 0 18 18"><g transform="translate(9.0 9.0) scale(0.86) translate(-9.0 -9.0)"><rect x="2" y="2.5" width="4" height="4" stroke="#5c5c5c" stroke-width="1" fill="none" stroke-linecap="round" stroke-linejoin="round"/><path d="M6 4.5 H14 M12 2.5 L14.5 4.5 L12 6.5" stroke="#5c5c5c" stroke-width="1" fill="none" stroke-linecap="round" stroke-linejoin="round"/><rect x="2" y="10" width="14" height="5" stroke="#5c5c5c" stroke-width="1" fill="none" stroke-linecap="round" stroke-linejoin="round"/></g></svg>
<svg style="position:absolute;left:953.5px;top:33.5px;" width="18" height="18" viewBox="0 0 18 18"><g transform="translate(9.0 9.0) scale(0.86) translate(-9.0 -9.0)"><rect x="1.5" y="2.5" width="4" height="13" stroke="#5c5c5c" stroke-width="1" fill="none" stroke-linecap="round" stroke-linejoin="round"/><path d="M11.5 13 V3 M9.5 5 L11.5 3 L13.5 5" stroke="#5c5c5c" stroke-width="1" fill="none" stroke-linecap="round" stroke-linejoin="round"/><rect x="9.5" y="11" width="5" height="5" stroke="#5c5c5c" stroke-width="1" fill="none" stroke-linecap="round" stroke-linejoin="round"/></g></svg>
<svg style="position:absolute;left:983.0px;top:33.5px;" width="18" height="18" viewBox="0 0 18 18"><g transform="translate(9.0 9.0) scale(0.86) translate(-9.0 -9.0)"><rect x="7" y="7" width="4" height="4" stroke="#5c5c5c" stroke-width="1" fill="none" stroke-linecap="round" stroke-linejoin="round"/><path d="M9 2 V5 M9 13 V16 M2 9 H5 M13 9 H16" stroke="#5c5c5c" stroke-width="1.1" fill="none" stroke-linecap="round" stroke-linejoin="round"/><path d="M9 1 L7 3.5 H11 Z M9 17 L7 14.5 H11 Z M1 9 L3.5 7 V11 Z M17 9 L14.5 7 V11 Z" fill="#5c5c5c"/></g></svg>
<svg style="position:absolute;left:1011.5px;top:33.5px;" width="18" height="18" viewBox="0 0 18 18"><g transform="translate(9.0 9.0) scale(0.86) translate(-9.0 -9.0)"><circle cx="9" cy="9" r="5.8" stroke="#e0e0e0" stroke-width="1.6" fill="none" stroke-linecap="round" stroke-linejoin="round"/><rect x="6.5" y="7" width="5" height="4" stroke="#e0e0e0" stroke-width="1.3" fill="none" stroke-linecap="round" stroke-linejoin="round"/><path d="M9 1 V3.5 M9 14.5 V17 M1 9 H3.5 M14.5 9 H17" stroke="#e0e0e0" stroke-width="1.6" fill="none" stroke-linecap="round" stroke-linejoin="round"/></g></svg>
<div style="position:absolute;left:1038px;top:35px;width:1px;height:16px;background:#555"></div>
<svg style="position:absolute;left:1045.7px;top:33.5px;" width="18" height="18" viewBox="0 0 18 18"><g transform="translate(9.0 9.0) scale(0.86) translate(-9.0 -9.0)"><path d="M1 3.5 H11 M5 15.5 H16" stroke="#5c5c5c" stroke-width="1" stroke-dasharray="1.3 1.7" fill="none"/><rect x="12.5" y="1.5" width="4" height="4" stroke="#5c5c5c" stroke-width="1" fill="none" stroke-linecap="round" stroke-linejoin="round"/><rect x="7" y="7" width="4" height="4" stroke="#5c5c5c" stroke-width="1" fill="none" stroke-linecap="round" stroke-linejoin="round"/><rect x="1.5" y="13" width="4" height="4" stroke="#5c5c5c" stroke-width="1" fill="none" stroke-linecap="round" stroke-linejoin="round"/></g></svg>
<svg style="position:absolute;left:1074.0px;top:33.5px;" width="18" height="18" viewBox="0 0 18 18"><g transform="translate(9.0 9.0) scale(0.86) translate(-9.0 -9.0)"><path d="M3.5 7 V17 M15 1 V12" stroke="#5c5c5c" stroke-width="1" stroke-dasharray="1.3 1.7" fill="none"/><rect x="1.5" y="1.5" width="4" height="4" stroke="#5c5c5c" stroke-width="1" fill="none" stroke-linecap="round" stroke-linejoin="round"/><rect x="7" y="7.5" width="4" height="4" stroke="#5c5c5c" stroke-width="1" fill="none" stroke-linecap="round" stroke-linejoin="round"/><rect x="13" y="13" width="4" height="4" stroke="#5c5c5c" stroke-width="1" fill="none" stroke-linecap="round" stroke-linejoin="round"/></g></svg>
<div style="position:absolute;left:1100.4px;top:35px;width:1px;height:16px;background:#555"></div>
<svg style="position:absolute;left:1108.0px;top:33.5px;" width="18" height="18" viewBox="0 0 18 18"><g transform="translate(9.0 9.0) scale(0.86) translate(-9.0 -9.0)"><path d="M9 1 V17" stroke="#5c5c5c" stroke-width="1" stroke-dasharray="1.3 1.7" fill="none"/><path d="M1.5 3.5 V15 L7 9 Z M16.5 3.5 V15 L11 9 Z" stroke="#5c5c5c" stroke-width="1.1" fill="none" stroke-linecap="round" stroke-linejoin="round"/></g></svg>
<svg style="position:absolute;left:1136.5px;top:33.5px;" width="18" height="18" viewBox="0 0 18 18"><g transform="translate(9.0 9.0) scale(0.86) translate(-9.0 -9.0)"><path d="M1 9 H17" stroke="#5c5c5c" stroke-width="1" stroke-dasharray="1.3 1.7" fill="none"/><path d="M3 1.5 H15 L9 7.5 Z M3 16.5 H15 L9 10.5 Z" stroke="#5c5c5c" stroke-width="1.1" fill="none" stroke-linecap="round" stroke-linejoin="round"/></g></svg>
<div style="position:absolute;left:7px;top:68px;width:42px;height:23px;border:1px solid #5f5f5f;border-radius:3px;background:transparent"></div>
<svg style="position:absolute;left:11.0px;top:71.5px;" width="18" height="18" viewBox="0 0 18 18"><path d="M2 2.5 H16 M2.5 2 V16.5" stroke="#5d4fa0" stroke-width="1" fill="none" opacity="0.9"/><rect x="4.5" y="0.8" width="0.9" height="1.6" fill="#5d4fa0"/><rect x="0.8" y="4.5" width="1.6" height="0.9" fill="#5d4fa0"/><rect x="7.4" y="0.8" width="0.9" height="1.6" fill="#5d4fa0"/><rect x="0.8" y="7.1" width="1.6" height="0.9" fill="#5d4fa0"/><rect x="10.3" y="0.8" width="0.9" height="1.6" fill="#5d4fa0"/><rect x="0.8" y="9.7" width="1.6" height="0.9" fill="#5d4fa0"/><rect x="13.2" y="0.8" width="0.9" height="1.6" fill="#5d4fa0"/><rect x="0.8" y="12.3" width="1.6" height="0.9" fill="#5d4fa0"/><rect x="16.1" y="0.8" width="0.9" height="1.6" fill="#5d4fa0"/><rect x="0.8" y="14.9" width="1.6" height="0.9" fill="#5d4fa0"/><path d="M5 8 V15.5 M16 8 V15.5 M6 11.8 H15" stroke="#e0e0e0" stroke-width="1.2" fill="none" stroke-linecap="round" stroke-linejoin="round"/><path d="M5.6 11.8 L9 9.6 V14 Z M15.4 11.8 L12 9.6 V14 Z" fill="#e0e0e0"/></svg>
<svg style="position:absolute;left:36px;top:76.5px;" width="10" height="8" viewBox="0 0 10 8"><path d="M1.5 2.25 L5 5.75 L8.5 2.25" stroke="#bbb" stroke-width="1.1" fill="none" stroke-linecap="round" stroke-linejoin="round"/></svg>
<div class="t" style="left:60.5px;top:74.5px;font-size:12.5px;color:#e0e0e0;font-weight:normal;">Line:</div>
<div style="position:absolute;left:91.5px;top:68px;width:23.0px;height:23px;border:1px solid #5f5f5f;border-radius:3px;background:transparent"></div>
<div style="position:absolute;left:97px;top:73.5px;width:15px;height:15px;background:#e8230c;border:0.6px solid #f5b0a0;box-sizing:border-box"></div>
<div style="position:absolute;left:127px;top:68px;width:59px;height:23px;border:1px solid #5f5f5f;border-radius:3px;background:transparent"></div>
<div style="position:absolute;left:142.5px;top:69px;width:1px;height:23px;background:#5f5f5f"></div>
<svg style="position:absolute;left:127px;top:68px;" width="16" height="25" viewBox="0 0 16 25"><path d="M4.5 8 L7.5 5 L10.5 8 M4.5 17 L7.5 20 L10.5 17" stroke="#bbb" stroke-width="1.1" fill="none" stroke-linecap="round" stroke-linejoin="round"/><path d="M2 12.5 H15" stroke="#5f5f5f" stroke-width="1"/></svg>
<div class="t" style="left:152px;top:75px;font-size:12.3px;color:#e0e0e0;font-weight:normal;letter-spacing:-0.75px">100%</div>
<div style="position:absolute;left:198px;top:68px;width:113px;height:23px;border:1px solid #5f5f5f;border-radius:3px;background:transparent"></div>
<div style="position:absolute;left:208px;top:80px;width:80px;height:2px;background:#eaeaea"></div>
<svg style="position:absolute;left:297.5px;top:76.5px;" width="10" height="8" viewBox="0 0 10 8"><path d="M1.5 2.25 L5 5.75 L8.5 2.25" stroke="#bbb" stroke-width="1.1" fill="none" stroke-linecap="round" stroke-linejoin="round"/></svg>
<div style="position:absolute;left:323px;top:68px;width:80px;height:23px;border:1px solid #5f5f5f;border-radius:3px;background:transparent"></div>
<div style="position:absolute;left:338.5px;top:69px;width:1px;height:23px;background:#5f5f5f"></div>
<svg style="position:absolute;left:323px;top:68px;" width="16" height="25" viewBox="0 0 16 25"><path d="M4.5 8 L7.5 5 L10.5 8 M4.5 17 L7.5 20 L10.5 17" stroke="#bbb" stroke-width="1.1" fill="none" stroke-linecap="round" stroke-linejoin="round"/><path d="M2 12.5 H15" stroke="#5f5f5f" stroke-width="1"/></svg>
<div class="t" style="left:362px;top:75px;font-size:12.2px;color:#e0e0e0;font-weight:normal;letter-spacing:-0.2px">1.00 pt</div>
<div class="t" style="left:415px;top:74.5px;font-size:12.5px;color:#e0e0e0;font-weight:normal;">Start:</div>
<div style="position:absolute;left:449px;top:68px;width:54px;height:23px;border:1px solid #5f5f5f;border-radius:3px;background:transparent"></div>
<svg style="position:absolute;left:455px;top:72px;" width="26" height="18" viewBox="0 0 26 18"><path d="M4 9 H20" stroke="#f0f0f0" stroke-width="2" fill="none" stroke-linecap="round" stroke-linejoin="round"/><path d="M8.5 4.5 L4 9 L8.5 13.5" stroke="#f0f0f0" stroke-width="2" fill="none" stroke-linecap="round" stroke-linejoin="round"/></svg>
<svg style="position:absolute;left:489.5px;top:76.5px;" width="10" height="8" viewBox="0 0 10 8"><path d="M1.5 2.25 L5 5.75 L8.5 2.25" stroke="#bbb" stroke-width="1.1" fill="none" stroke-linecap="round" stroke-linejoin="round"/></svg>
<div style="position:absolute;left:515px;top:68px;width:60px;height:23px;border:1px solid #5f5f5f;border-radius:3px;background:transparent"></div>
<div class="t" style="left:523px;top:74.5px;font-size:12.5px;color:#e0e0e0;font-weight:normal;">Auto</div>
<svg style="position:absolute;left:561.5px;top:76.5px;" width="10" height="8" viewBox="0 0 10 8"><path d="M1.5 2.25 L5 5.75 L8.5 2.25" stroke="#bbb" stroke-width="1.1" fill="none" stroke-linecap="round" stroke-linejoin="round"/></svg>
<div class="t" style="left:585.5px;top:74.5px;font-size:12.5px;color:#e0e0e0;font-weight:normal;">End:</div>
<div style="position:absolute;left:614px;top:68px;width:54px;height:23px;border:1px solid #5f5f5f;border-radius:3px;background:transparent"></div>
<svg style="position:absolute;left:620px;top:72px;" width="26" height="18" viewBox="0 0 26 18"><path d="M4 9 H21" stroke="#f0f0f0" stroke-width="2" fill="none" stroke-linecap="round" stroke-linejoin="round"/><path d="M16.5 4.5 L21 9 L16.5 13.5" stroke="#f0f0f0" stroke-width="2" fill="none" stroke-linecap="round" stroke-linejoin="round"/></svg>
<svg style="position:absolute;left:655px;top:76.5px;" width="10" height="8" viewBox="0 0 10 8"><path d="M1.5 2.25 L5 5.75 L8.5 2.25" stroke="#bbb" stroke-width="1.1" fill="none" stroke-linecap="round" stroke-linejoin="round"/></svg>
<div style="position:absolute;left:680.5px;top:68px;width:59.5px;height:23px;border:1px solid #5f5f5f;border-radius:3px;background:transparent"></div>
<div class="t" style="left:688.5px;top:74.5px;font-size:12.5px;color:#e0e0e0;font-weight:normal;">Auto</div>
<svg style="position:absolute;left:726.5px;top:76.5px;" width="10" height="8" viewBox="0 0 10 8"><path d="M1.5 2.25 L5 5.75 L8.5 2.25" stroke="#bbb" stroke-width="1.1" fill="none" stroke-linecap="round" stroke-linejoin="round"/></svg>
<div style="position:absolute;left:752px;top:68px;width:23px;height:23px;border:1px solid #5f5f5f;border-radius:3px;background:transparent"></div>
<svg style="position:absolute;left:755.5px;top:71.5px;" width="18" height="18" viewBox="0 0 18 18"><path d="M1.5 16.3 H8.7 L5.2 12 Z" stroke="#e8e8e8" stroke-width="1.1" fill="none" stroke-linecap="round" stroke-linejoin="round"/><path d="M11 1.7 L6.3 6.5 L15.5 12.3 L11.5 15.5 L5.2 12 L6.3 6.5 M8.3 8 L7 13 M11 9.5 L9.5 14.5" stroke="#c9a53a" stroke-width="1.1" fill="none" stroke-linecap="round" stroke-linejoin="round"/></svg>
<div style="position:absolute;left:787px;top:68px;width:61px;height:23px;border:1px solid #5f5f5f;border-radius:3px;background:transparent"></div>
<div class="t" style="left:797px;top:74.5px;font-size:12.5px;color:#e0e0e0;font-weight:normal;">Units</div>
<svg style="position:absolute;left:834.5px;top:76.5px;" width="10" height="8" viewBox="0 0 10 8"><path d="M1.5 2.25 L5 5.75 L8.5 2.25" stroke="#bbb" stroke-width="1.1" fill="none" stroke-linecap="round" stroke-linejoin="round"/></svg>
<div style="position:absolute;left:859.5px;top:68px;width:42.0px;height:23px;border:1px solid #5f5f5f;border-radius:3px;background:transparent"></div>
<svg style="position:absolute;left:863.5px;top:71.5px;" width="18" height="18" viewBox="0 0 18 18"><rect x="2" y="2" width="14" height="14" stroke="#e6e6e6" stroke-width="1.1" fill="none" stroke-linecap="round" stroke-linejoin="round"/><path d="M4.5 5 H13.5 M5.5 7.8 H12.5 M4.5 10.6 H13.5 M6.5 13.4 H11.5" stroke="#e6e6e6" stroke-width="1" fill="none" stroke-linecap="round" stroke-linejoin="round"/></svg>
<svg style="position:absolute;left:888.5px;top:76.5px;" width="10" height="8" viewBox="0 0 10 8"><path d="M1.5 2.25 L5 5.75 L8.5 2.25" stroke="#bbb" stroke-width="1.1" fill="none" stroke-linecap="round" stroke-linejoin="round"/></svg>
<div class="t" style="left:913.5px;top:74.5px;font-size:12.5px;color:#e0e0e0;font-weight:normal;">Font:</div>
<div style="position:absolute;left:946px;top:68px;width:148px;height:23px;border:1px solid #5f5f5f;border-radius:3px;background:transparent"></div>
<div class="t" style="left:954px;top:74.5px;font-size:12.5px;color:#e6e6e6;font-weight:normal;">Helvetica</div>
<svg style="position:absolute;left:1080.5px;top:76.5px;" width="10" height="8" viewBox="0 0 10 8"><path d="M1.5 2.25 L5 5.75 L8.5 2.25" stroke="#bbb" stroke-width="1.1" fill="none" stroke-linecap="round" stroke-linejoin="round"/></svg>
<div style="position:absolute;left:1106px;top:68px;width:48px;height:23px;border:1px solid #5f5f5f;border-radius:3px;background:transparent"></div>
<div style="position:absolute;left:1136px;top:69px;width:1px;height:23px;background:#5f5f5f"></div>
<div class="t" style="left:1113px;top:74.5px;font-size:12.5px;color:#e6e6e6;font-weight:normal;letter-spacing:-0.4px">12</div>
<svg style="position:absolute;left:1141px;top:76.5px;" width="10" height="8" viewBox="0 0 10 8"><path d="M1.5 2.25 L5 5.75 L8.5 2.25" stroke="#bbb" stroke-width="1.1" fill="none" stroke-linecap="round" stroke-linejoin="round"/></svg>
<div style="position:absolute;left:1166px;top:68px;width:23px;height:23px;border:1px solid #5f5f5f;border-radius:3px;background:transparent"></div>
<div style="position:absolute;left:1171.5px;top:73.5px;width:15px;height:15px;background:#e8230c;border:0.6px solid #f5b0a0;box-sizing:border-box"></div>
<div style="position:absolute;left:1201px;top:68px;width:60px;height:23px;border:1px solid #5f5f5f;border-radius:3px;background:transparent"></div>
<div class="t" style="left:1210.5px;top:74.5px;font-size:12.5px;color:#e0e0e0;font-weight:normal;">Style</div>
<svg style="position:absolute;left:1247px;top:76.5px;" width="10" height="8" viewBox="0 0 10 8"><path d="M1.5 2.25 L5 5.75 L8.5 2.25" stroke="#bbb" stroke-width="1.1" fill="none" stroke-linecap="round" stroke-linejoin="round"/></svg>
<div class="t" style="left:1272.5px;top:74.5px;font-size:12.5px;color:#e0e0e0;font-weight:normal;">Totals:</div>
<div style="position:absolute;left:1314px;top:68px;width:111px;height:23px;border:1px solid #5f5f5f;border-radius:3px;background:transparent"></div>
<div class="t" style="left:1324px;top:75px;font-size:12px;color:#e6e6e6;font-weight:normal;letter-spacing:-0.22px">Length = 30'-0"</div>
<svg style="position:absolute;left:1411px;top:76.5px;" width="10" height="8" viewBox="0 0 10 8"><path d="M1.5 2.25 L5 5.75 L8.5 2.25" stroke="#bbb" stroke-width="1.1" fill="none" stroke-linecap="round" stroke-linejoin="round"/></svg>
<div style="position:absolute;left:29px;top:127px;width:1210px;height:584px;pointer-events:none;background:linear-gradient(rgba(0,0,0,0) 0px, rgba(0,0,0,0) 338px, rgba(0,0,0,0.055) 383px, rgba(0,0,0,0.11) 450px, rgba(0,0,0,0.17) 520px, rgba(0,0,0,0.225) 584px)"></div>
<svg style="position:absolute;left:4.5px;top:103.5px;" width="18" height="18" viewBox="0 0 18 18"><rect x="3.5" y="1.5" width="11" height="14.5" stroke="#e8f0f8" stroke-width="1.1" fill="none" stroke-linecap="round" stroke-linejoin="round"/><path d="M3.5 8.7 H14.5 M7 4.5 V5.5 H11 V4.5 M7 11.5 V12.5 H11 V11.5" stroke="#e8f0f8" stroke-width="1" fill="none" stroke-linecap="round" stroke-linejoin="round"/></svg>
<svg style="position:absolute;left:4.5px;top:131.5px;" width="18" height="18" viewBox="0 0 18 18"><rect x="2" y="2" width="6" height="6" stroke="#e2e2e2" stroke-width="1.2" fill="none" stroke-linecap="round" stroke-linejoin="round"/><rect x="10" y="2" width="6" height="6" stroke="#e2e2e2" stroke-width="1.2" fill="none" stroke-linecap="round" stroke-linejoin="round"/><rect x="2" y="10" width="6" height="6" stroke="#e2e2e2" stroke-width="1.2" fill="none" stroke-linecap="round" stroke-linejoin="round"/><rect x="10" y="10" width="6" height="6" stroke="#e2e2e2" stroke-width="1.2" fill="none" stroke-linecap="round" stroke-linejoin="round"/></svg>
<svg style="position:absolute;left:4.5px;top:159.5px;" width="18" height="18" viewBox="0 0 18 18"><path d="M9 2 L16 6.5 L9 11 L2 6.5 Z" stroke="#e2e2e2" stroke-width="1.2" fill="none" stroke-linecap="round" stroke-linejoin="round"/><path d="M4.5 9 L2 10.5 L9 15 L16 10.5 L13.5 9" stroke="#e2e2e2" stroke-width="1.2" fill="none" stroke-linecap="round" stroke-linejoin="round"/></svg>
<svg style="position:absolute;left:4.5px;top:187.5px;" width="18" height="18" viewBox="0 0 18 18"><rect x="2" y="5.5" width="14" height="10" stroke="#e2e2e2" stroke-width="1.2" fill="none" stroke-linecap="round" stroke-linejoin="round"/><path d="M6.5 5.5 V3 H11.5 V5.5 M2 10 H16 M5 9 V11 M13 9 V11" stroke="#e2e2e2" stroke-width="1.2" fill="none" stroke-linecap="round" stroke-linejoin="round"/></svg>
<svg style="position:absolute;left:4.5px;top:215.5px;" width="18" height="18" viewBox="0 0 18 18"><path d="M13 6 V2 H3 V16 H13 V13" stroke="#e2e2e2" stroke-width="1.2" fill="none" stroke-linecap="round" stroke-linejoin="round"/><path d="M5 5 H10 M5 8 H10 M5 11 H8" stroke="#e2e2e2" stroke-width="1.3" fill="none" stroke-linecap="round" stroke-linejoin="round"/><path d="M16.5 6 L10 12.5 L9 15 L11.5 14 L18 7.5 Z" stroke="#e2e2e2" stroke-width="1.1" fill="none" stroke-linecap="round" stroke-linejoin="round"/></svg>
<svg style="position:absolute;left:4.5px;top:243.0px;" width="18" height="18" viewBox="0 0 18 18"><path d="M2.5 17 H16" stroke="#e2e2e2" stroke-width="1.2" fill="none" stroke-linecap="round" stroke-linejoin="round"/><path d="M6 13 L4 14.5 L5.5 10 L10 6 L13 9 L9 13.5 Z M10 6 L12 3 M13 9 L16 7.5 M12 3 L16 7.5" stroke="#e2e2e2" stroke-width="1.1" fill="none" stroke-linecap="round" stroke-linejoin="round"/><circle cx="8" cy="10.5" r="1" fill="#e2e2e2"/></svg>
<svg style="position:absolute;left:4.5px;top:272.0px;" width="18" height="18" viewBox="0 0 18 18"><path d="M2 7 L8 2.5 L15.5 3.5 L16 13.5 L9 16.5 L2 14 Z" stroke="#e2e2e2" stroke-width="1.2" fill="none" stroke-linecap="round" stroke-linejoin="round"/><path d="M5 14.5 V11 H8 V15.5" stroke="#e2e2e2" stroke-width="1.1" fill="none" stroke-linecap="round" stroke-linejoin="round"/></svg>
<div class="t" style="left:36.5px;top:106px;font-size:12.5px;color:#e2e2e2;font-weight:normal;letter-spacing:-0.48px">Example Floor Plan_AR_February 2020*</div>
<svg style="position:absolute;left:255px;top:106px;" width="14" height="14" viewBox="0 0 14 14"><path d="M2.5 2.5 L11.5 11.5 M11.5 2.5 L2.5 11.5" stroke="#e6e6e6" stroke-width="1.3" fill="none" stroke-linecap="round" stroke-linejoin="round"/></svg>
<svg style="position:absolute;left:1219px;top:108.5px;" width="10" height="8" viewBox="0 0 10 8"><path d="M1 2.0 L5 6.0 L9 2.0" stroke="#d0d0d0" stroke-width="1.1" fill="none" stroke-linecap="round" stroke-linejoin="round"/></svg>
<svg style="position:absolute;left:4.5px;top:716.0px;" width="18" height="18" viewBox="0 0 18 18"><path d="M6.5 4.5 H15.5 M6.5 9 H15.5 M6.5 13.5 H15.5" stroke="#cfe0ee" stroke-width="2" fill="none" stroke-linecap="round" stroke-linejoin="round"/><rect x="2" y="3.5" width="2" height="2" fill="#cfe0ee"/><rect x="2" y="8" width="2" height="2" fill="#cfe0ee"/><rect x="2" y="12.5" width="2" height="2" fill="#cfe0ee"/></svg>
<svg style="position:absolute;left:34.0px;top:716.0px;" width="18" height="18" viewBox="0 0 18 18"><rect x="2.5" y="2.5" width="13" height="13" stroke="#555" stroke-width="1.1" fill="none" stroke-linecap="round" stroke-linejoin="round"/><path d="M2.5 4 H15.5" stroke="#444" stroke-width="1" fill="none" stroke-linecap="round" stroke-linejoin="round"/></svg>
<svg style="position:absolute;left:62.5px;top:716.0px;" width="18" height="18" viewBox="0 0 18 18"><rect x="2.5" y="2.5" width="13" height="13" stroke="#e2e2e2" stroke-width="1.2" fill="none" stroke-linecap="round" stroke-linejoin="round"/><path d="M9 2.5 V15.5 M2.5 4 H15.5" stroke="#e2e2e2" stroke-width="1.1" fill="none" stroke-linecap="round" stroke-linejoin="round"/></svg>
<svg style="position:absolute;left:91.5px;top:716.0px;" width="18" height="18" viewBox="0 0 18 18"><rect x="2.5" y="2.5" width="13" height="13" stroke="#e2e2e2" stroke-width="1.2" fill="none" stroke-linecap="round" stroke-linejoin="round"/><path d="M2.5 4 H15.5 M2.5 7.5 H15.5 M2.5 10.5 H15.5" stroke="#e2e2e2" stroke-width="1.1" fill="none" stroke-linecap="round" stroke-linejoin="round"/></svg>
<div style="position:absolute;left:117.5px;top:717px;width:1px;height:16px;background:#555"></div>
<svg style="position:absolute;left:125.5px;top:716.0px;" width="18" height="18" viewBox="0 0 18 18"><path d="M3.5 2 H10.5 L14.5 6 V16 H3.5 Z M10.5 2 V6 H14.5" stroke="#e2e2e2" stroke-width="1.1" fill="none" stroke-linecap="round" stroke-linejoin="round"/><path d="M4.5 10.5 H13.5 M9 6.5 V14.5" stroke="#e2e2e2" stroke-width="1" fill="none" stroke-linecap="round" stroke-linejoin="round"/><path d="M4 10.5 L6 9 V12 Z M14 10.5 L12 9 V12 Z M9 6 L7.5 8 H10.5 Z M9 15 L7.5 13 H10.5 Z" fill="#e2e2e2"/></svg>
<svg style="position:absolute;left:153.5px;top:716.0px;" width="18" height="18" viewBox="0 0 18 18"><path d="M3 2.5 V4.5 H15 V2.5" stroke="#e2e2e2" stroke-width="1.1" fill="none" stroke-linecap="round" stroke-linejoin="round"/><path d="M3 16 V7 H11.5 L15 10 V16" stroke="#e2e2e2" stroke-width="1.1" fill="none" stroke-linecap="round" stroke-linejoin="round"/><path d="M3.5 14.5 H14.5" stroke="#e2e2e2" stroke-width="1" fill="none" stroke-linecap="round" stroke-linejoin="round"/><path d="M3.5 14.5 L5.5 13 V16 Z M14.5 14.5 L12.5 13 V16 Z" fill="#e2e2e2"/></svg>
<svg style="position:absolute;left:182.5px;top:715.6px;" width="18" height="18" viewBox="0 0 18 18"><path d="M9 1 V7.5 M9 10.5 V17 M1 9 H7.5 M10.5 9 H17" stroke="#e2e2e2" stroke-width="1.1" fill="none" stroke-linecap="round" stroke-linejoin="round"/></svg>
<div style="position:absolute;left:311px;top:711px;width:29px;height:28px;background:#0f4a7e"></div>
<svg style="position:absolute;left:316.5px;top:716.0px;" width="18" height="18" viewBox="0 0 18 18"><path d="M5 10 V5 Q5 3.5 6.3 3.5 Q7.5 3.5 7.5 5 V8.5 V3 Q7.5 1.8 8.8 1.8 Q10 1.8 10 3 V8.5 V3.5 Q10 2.3 11.3 2.3 Q12.5 2.3 12.5 3.5 V9 V5.5 Q12.5 4.3 13.7 4.3 Q15 4.3 15 5.5 V11 Q15 16 10 16.5 Q6.5 16.5 4.5 13.5 L2 10.5 Q1.5 9 3 8.8 Q4 8.8 5 10" stroke="#e8eef4" stroke-width="1.1" fill="none" stroke-linecap="round" stroke-linejoin="round"/></svg>
<svg style="position:absolute;left:345.5px;top:716.0px;" width="18" height="18" viewBox="0 0 18 18"><path d="M4 2 V15 L7.5 11.5 L10 16.5 L12 15.5 L9.5 10.5 L14 10.5 Z" stroke="#e2e2e2" stroke-width="1.2" fill="none" stroke-linecap="round" stroke-linejoin="round"/></svg>
<svg style="position:absolute;left:375.0px;top:716.0px;" width="18" height="18" viewBox="0 0 18 18"><path d="M2.5 2 H6.5 M4.5 2 V16 M2.5 16 H6.5" stroke="#e2e2e2" stroke-width="1.2" fill="none" stroke-linecap="round" stroke-linejoin="round"/><path d="M8 13 L11 4 L14 13 M9 10 H13" stroke="#e2e2e2" stroke-width="1.2" fill="none" stroke-linecap="round" stroke-linejoin="round"/></svg>
<svg style="position:absolute;left:402.5px;top:716.0px;" width="18" height="18" viewBox="0 0 18 18"><circle cx="7.5" cy="7.5" r="5.5" stroke="#e2e2e2" stroke-width="1.3" fill="none" stroke-linecap="round" stroke-linejoin="round"/><path d="M11.5 11.5 L16 16 M5.5 6 H9.5 M7.5 4 V8 M5.5 10 H9.5" stroke="#e2e2e2" stroke-width="1.2" fill="none" stroke-linecap="round" stroke-linejoin="round"/></svg>
<svg style="position:absolute;left:431.0px;top:716.0px;" width="18" height="18" viewBox="0 0 18 18"><path d="M4 4 V14 M14 4 L7 9 L14 14 Z" stroke="#484848" stroke-width="1.1" fill="none" stroke-linecap="round" stroke-linejoin="round"/></svg>
<svg style="position:absolute;left:460.0px;top:716.0px;" width="18" height="18" viewBox="0 0 18 18"><path d="M12 4 L6 9 L12 14 Z" stroke="#484848" stroke-width="1.1" fill="none" stroke-linecap="round" stroke-linejoin="round"/></svg>
<div style="position:absolute;left:485px;top:715px;width:243px;height:18px;border:1px solid #5a5a5a;border-radius:2px;background:transparent"></div>
<div class="t" style="left:570px;top:719px;font-size:12px;color:#dcdcdc;font-weight:normal;">A2.2.1 (1 of 6)</div>
<svg style="position:absolute;left:735.5px;top:716.0px;" width="18" height="18" viewBox="0 0 18 18"><path d="M6 5 L12 9 L6 13 Z" stroke="#e2e2e2" stroke-width="1.1" fill="none" stroke-linecap="round" stroke-linejoin="round"/></svg>
<svg style="position:absolute;left:764.0px;top:716.0px;" width="18" height="18" viewBox="0 0 18 18"><path d="M5 5 L11 9 L5 13 Z M13 5 V13" stroke="#e2e2e2" stroke-width="1.1" fill="none" stroke-linecap="round" stroke-linejoin="round"/></svg>
<div style="position:absolute;left:791px;top:717px;width:1px;height:16px;background:#555"></div>
<svg style="position:absolute;left:798.0px;top:716.0px;" width="18" height="18" viewBox="0 0 18 18"><circle cx="9" cy="9" r="7" stroke="#e2e2e2" stroke-width="1.2" fill="none" stroke-linecap="round" stroke-linejoin="round"/><path d="M11 5.5 L6.5 9 L11 12.5 Z" stroke="#e2e2e2" stroke-width="1.1" fill="none" stroke-linecap="round" stroke-linejoin="round"/></svg>
<svg style="position:absolute;left:826.0px;top:716.0px;" width="18" height="18" viewBox="0 0 18 18"><circle cx="9" cy="9" r="7" stroke="#4a4a4a" stroke-width="1.2" fill="none" stroke-linecap="round" stroke-linejoin="round"/><path d="M7 5.5 L11.5 9 L7 12.5 Z" stroke="#4a4a4a" stroke-width="1.1" fill="none" stroke-linecap="round" stroke-linejoin="round"/></svg>
<svg style="position:absolute;left:976.0px;top:716.0px;" width="18" height="18" viewBox="0 0 18 18"><circle cx="9" cy="9" r="3" stroke="#e2e2e2" stroke-width="1.2" fill="none" stroke-linecap="round" stroke-linejoin="round"/><path d="M9 1.5 V4 M9 14 V16.5 M1.5 9 H4 M14 9 H16.5 M3.7 3.7 L5.4 5.4 M12.6 12.6 L14.3 14.3 M3.7 14.3 L5.4 12.6 M12.6 5.4 L14.3 3.7" stroke="#e2e2e2" stroke-width="1.1" fill="none" stroke-linecap="round" stroke-linejoin="round"/></svg>
<svg style="position:absolute;left:1000.5px;top:722px;" width="10" height="8" viewBox="0 0 10 8"><path d="M2 2.5 L5 5.5 L8 2.5" stroke="#999" stroke-width="1.1" fill="none" stroke-linecap="round" stroke-linejoin="round"/></svg>
<div style="position:absolute;left:1011px;top:711px;width:29px;height:28px;background:#0f4a7e"></div>
<svg style="position:absolute;left:1016.5px;top:716.0px;" width="18" height="18" viewBox="0 0 18 18"><circle cx="9" cy="9" r="5.5" stroke="#e0e8f0" stroke-width="1.5" fill="none" stroke-linecap="round" stroke-linejoin="round"/><path d="M3 15 L15 3" stroke="#e0e8f0" stroke-width="2.2" fill="none" stroke-linecap="round" stroke-linejoin="round"/></svg>
<div class="t" style="left:1050px;top:718px;font-size:13.5px;color:#e2e2e2;font-weight:normal;">1/8" = 1'-0"</div>
<div class="t" style="left:1134px;top:718px;font-size:13.5px;color:#e2e2e2;font-weight:normal;">42.00 x 30.00 in</div>
<div style="position:absolute;left:1239px;top:711px;width:1px;height:29px;background:#151515"></div>
<svg style="position:absolute;left:1511.5px;top:103.5px;" width="18" height="18" viewBox="0 0 18 18"><circle cx="9" cy="9" r="2.8" stroke="#dce8f4" stroke-width="1.2" fill="none" stroke-linecap="round" stroke-linejoin="round"/><path d="M7.6 1.8 H10.4 L10.9 3.8 L12.6 4.6 L14.4 3.6 L16.4 5.6 L15.4 7.4 L16.2 9.1 L16.2 9 V10.4 L14.2 10.9 L13.4 12.6 L14.4 14.4 L12.4 16.4 L10.6 15.4 L10.4 16.2 H7.6 L7.1 14.2 L5.4 13.4 L3.6 14.4 L1.6 12.4 L2.6 10.6 L1.8 8.9 V7.6 L3.8 7.1 L4.6 5.4 L3.6 3.6 L5.6 1.6 L7.4 2.6 Z" stroke="#dce8f4" stroke-width="1.1" fill="none" stroke-linecap="round" stroke-linejoin="round"/></svg>
<svg style="position:absolute;left:1511.5px;top:131.0px;" width="18" height="18" viewBox="0 0 18 18"><rect x="2" y="5.5" width="14" height="7" stroke="#e2e2e2" stroke-width="1.2" fill="none" stroke-linecap="round" stroke-linejoin="round"/><path d="M5 5.5 V8.5 M8 5.5 V9.5 M11 5.5 V8.5 M14 5.5 V9.5" stroke="#e2e2e2" stroke-width="1" fill="none" stroke-linecap="round" stroke-linejoin="round"/></svg>
<svg style="position:absolute;left:1511.5px;top:159.0px;" width="18" height="18" viewBox="0 0 18 18"><path d="M4 2 H14 V16 H4 Z M4 13 H14 M7 2 V9 L8.5 7.5 L10 9 V2" stroke="#e2e2e2" stroke-width="1.2" fill="none" stroke-linecap="round" stroke-linejoin="round"/></svg>
<svg style="position:absolute;left:1511.5px;top:186.5px;" width="18" height="18" viewBox="0 0 18 18"><path d="M3 3 H15 V15 H3 Z M9 3 V7 M11.5 7 H15 M9 9 V11 H6 V15 M3 9 H6" stroke="#e2e2e2" stroke-width="1.2" fill="none" stroke-linecap="round" stroke-linejoin="round"/></svg>
<svg style="position:absolute;left:1511.5px;top:215.5px;" width="18" height="18" viewBox="0 0 18 18"><path d="M16 4.5 H7 L2 9 L7 13.5 H16 Z" stroke="#e2e2e2" stroke-width="1.2" fill="none" stroke-linecap="round" stroke-linejoin="round"/></svg>
<svg style="position:absolute;left:1511.5px;top:243.5px;" width="18" height="18" viewBox="0 0 18 18"><path d="M4.5 9.5 V3 H13.5 V9.5 M2 9.5 H16 V12 H2 Z M2 14.5 H16 M6.5 9.5 V5 H11.5 V9.5" stroke="#e2e2e2" stroke-width="1.2" fill="none" stroke-linecap="round" stroke-linejoin="round"/></svg>
<svg style="position:absolute;left:1511.5px;top:271.0px;" width="18" height="18" viewBox="0 0 18 18"><path d="M9 13 Q4.5 8.5 4.5 6 Q4.5 1.8 9 1.8 Q13.5 1.8 13.5 6 Q13.5 8.5 9 13 Z" stroke="#e2e2e2" stroke-width="1.2" fill="none" stroke-linecap="round" stroke-linejoin="round"/><circle cx="9" cy="6" r="1.8" stroke="#e2e2e2" stroke-width="1.1" fill="none" stroke-linecap="round" stroke-linejoin="round"/><path d="M5.5 11.5 Q2 12.5 2 14 Q2 16.5 9 16.5 Q16 16.5 16 14 Q16 12.5 12.5 11.5" stroke="#e2e2e2" stroke-width="1.1" fill="none" stroke-linecap="round" stroke-linejoin="round"/></svg>
<svg style="position:absolute;left:1511.5px;top:299.0px;" width="18" height="18" viewBox="0 0 18 18"><circle cx="7.5" cy="7.5" r="5.3" stroke="#e2e2e2" stroke-width="1.3" fill="none" stroke-linecap="round" stroke-linejoin="round"/><path d="M11.3 11.3 L16 16" stroke="#e2e2e2" stroke-width="1.4" fill="none" stroke-linecap="round" stroke-linejoin="round"/></svg>
<svg style="position:absolute;left:1246.0px;top:102.5px;" width="18" height="18" viewBox="0 0 18 18"><path d="M2 2.5 H17 M2.5 2 V16.5" stroke="#5d4fa0" stroke-width="1" fill="none" opacity="0.9"/><rect x="4.5" y="0.8" width="0.9" height="1.6" fill="#5d4fa0"/><rect x="0.8" y="4.5" width="1.6" height="0.9" fill="#5d4fa0"/><rect x="7.4" y="0.8" width="0.9" height="1.6" fill="#5d4fa0"/><rect x="0.8" y="7.1" width="1.6" height="0.9" fill="#5d4fa0"/><rect x="10.3" y="0.8" width="0.9" height="1.6" fill="#5d4fa0"/><rect x="0.8" y="9.7" width="1.6" height="0.9" fill="#5d4fa0"/><rect x="13.2" y="0.8" width="0.9" height="1.6" fill="#5d4fa0"/><rect x="0.8" y="12.3" width="1.6" height="0.9" fill="#5d4fa0"/><rect x="16.1" y="0.8" width="0.9" height="1.6" fill="#5d4fa0"/><rect x="0.8" y="14.9" width="1.6" height="0.9" fill="#5d4fa0"/><path d="M5 8 V15.5 M16 8 V15.5 M6 11.8 H15" stroke="#e0e0e0" stroke-width="1.2" fill="none" stroke-linecap="round" stroke-linejoin="round"/><path d="M5.6 11.8 L9 9.6 V14 Z M15.4 11.8 L12 9.6 V14 Z" fill="#e0e0e0"/></svg>
<div class="t" style="left:1270px;top:102.8px;font-size:15.4px;color:#f2f2f2;font-weight:bold;letter-spacing:-0.47px">Length Measurement Properties</div>
<svg style="position:absolute;left:1490px;top:121px;" width="16" height="16" viewBox="0 0 16 16"><path d="M4 10 L8 6 L12 10" stroke="#444" stroke-width="1.3" fill="none" stroke-linecap="round" stroke-linejoin="round"/></svg>
<svg style="position:absolute;left:1490px;top:722px;" width="16" height="16" viewBox="0 0 16 16"><path d="M4 6 L8 10 L12 6" stroke="#444" stroke-width="1.3" fill="none" stroke-linecap="round" stroke-linejoin="round"/></svg>
<div class="t" style="left:1265.5px;top:203.5px;font-size:12px;color:#dedede;font-weight:normal;">Modified:</div>
<div class="t" style="left:1319.5px;top:203.5px;font-size:12px;color:#dedede;font-weight:normal;letter-spacing:-0.15px">7/20/2022 4:31:45 PM</div>
<div style="position:absolute;left:1261px;top:228px;width:14px;height:14px;border:1px solid #6a6a6a;border-radius:2px;box-sizing:border-box"></div>
<div class="t" style="left:1276.5px;top:228.5px;font-size:12px;color:#dedede;font-weight:normal;">Lock</div>
<div class="t" style="left:1452px;top:228.5px;font-size:12px;color:#3d8fd6;font-weight:normal;text-decoration:underline">(0) Rep</div>
<svg style="position:absolute;left:1246px;top:260px;" width="12" height="12" viewBox="0 0 12 12"><path d="M2.5 4 L6 7.5 L9.5 4" stroke="#aaa" stroke-width="1.1" fill="none" stroke-linecap="round" stroke-linejoin="round"/></svg>
<div class="t" style="left:1266px;top:259px;font-size:13.6px;color:#e6e6e6;font-weight:normal;">Appearance</div>
<div class="t" style="right:226.29999999999995px;top:288.5px;font-size:12px;color:#dedede">Color:</div>
<div style="position:absolute;left:1314px;top:283px;width:23px;height:23px;border:1px solid #5c5c5c;border-radius:3px;background:transparent"></div>
<div style="position:absolute;left:1319px;top:288.5px;width:14px;height:14px;background:#e8230c;border:0.6px solid #f0a090;box-sizing:border-box"></div>
<div class="t" style="right:226.29999999999995px;top:318.5px;font-size:12px;color:#dedede">Fill Color:</div>
<div style="position:absolute;left:1314px;top:312.5px;width:23px;height:23.0px;border:1px solid #5c5c5c;border-radius:3px;background:transparent"></div>
<div style="position:absolute;left:1319px;top:318.0px;width:14px;height:14px;background:#e8230c;border:0.6px solid #f0a090;box-sizing:border-box"></div>
<div style="position:absolute;left:1344px;top:318px;width:15px;height:15px;border:1px solid #6a6a6a;border-radius:2px;box-sizing:border-box"></div>
<div class="t" style="left:1360px;top:318.5px;font-size:12px;color:#dedede;font-weight:normal;">Highlight</div>
<div class="t" style="right:226.29999999999995px;top:348.5px;font-size:12px;color:#dedede">Opacity:</div>
<div style="position:absolute;left:1314px;top:343px;width:94px;height:23px;border:1px solid #5c5c5c;border-radius:3px;background:transparent"></div>
<div style="position:absolute;left:1326.5px;top:344px;width:1px;height:23px;background:#5c5c5c"></div>
<svg style="position:absolute;left:1314px;top:343px;" width="13" height="25" viewBox="0 0 13 25"><path d="M4 7 L6.5 5 L9 7 M4 18 L6.5 20 L9 18" stroke="#aaa" stroke-width="1" fill="none" stroke-linecap="round" stroke-linejoin="round"/><path d="M1 12.5 H12" stroke="#5c5c5c" stroke-width="1"/></svg>
<div class="t" style="right:130.5px;top:348.5px;font-size:12px;color:#dedede">100</div>
<div class="t" style="right:226.29999999999995px;top:379.0px;font-size:12px;color:#dedede">Line Width:</div>
<div style="position:absolute;left:1314px;top:373px;width:94px;height:23px;border:1px solid #5c5c5c;border-radius:3px;background:transparent"></div>
<div style="position:absolute;left:1326.5px;top:374px;width:1px;height:23px;background:#5c5c5c"></div>
<svg style="position:absolute;left:1314px;top:373px;" width="13" height="25" viewBox="0 0 13 25"><path d="M4 7 L6.5 5 L9 7 M4 18 L6.5 20 L9 18" stroke="#aaa" stroke-width="1" fill="none" stroke-linecap="round" stroke-linejoin="round"/><path d="M1 12.5 H12" stroke="#5c5c5c" stroke-width="1"/></svg>
<div class="t" style="right:130.5px;top:379px;font-size:12px;color:#dedede">1.00</div>
<div class="t" style="right:226.29999999999995px;top:407.0px;font-size:12px;color:#dedede">Style:</div>
<div style="position:absolute;left:1314.5px;top:404px;width:169.5px;height:19px;border:1px solid #5c5c5c;border-radius:2px;background:transparent"></div>
<div style="position:absolute;left:1318px;top:413px;width:150px;height:2px;background:#e8e8e8"></div>
<svg style="position:absolute;left:1472px;top:411px;" width="10" height="8" viewBox="0 0 10 8"><path d="M2 2.5 L5 5.5 L8 2.5" stroke="#aaa" stroke-width="1.1" fill="none" stroke-linecap="round" stroke-linejoin="round"/></svg>
<div class="t" style="right:226.29999999999995px;top:433.5px;font-size:12px;color:#dedede">Start:</div>
<div style="position:absolute;left:1314.5px;top:430px;width:94.5px;height:19px;border:1px solid #5c5c5c;border-radius:2px;background:transparent"></div>
<svg style="position:absolute;left:1324px;top:433px;" width="64" height="14" viewBox="0 0 64 14"><path d="M5 7 H61" stroke="#ececec" stroke-width="1.6" fill="none" stroke-linecap="round" stroke-linejoin="round"/><path d="M3 7 L10 3.2 V10.8 Z" fill="#ececec"/></svg>
<svg style="position:absolute;left:1397px;top:437px;" width="10" height="8" viewBox="0 0 10 8"><path d="M2 2.5 L5 5.5 L8 2.5" stroke="#aaa" stroke-width="1.1" fill="none" stroke-linecap="round" stroke-linejoin="round"/></svg>
<div style="position:absolute;left:1459.5px;top:430px;width:38.5px;height:19px;border:1px solid #5c5c5c;border-radius:2px;background:transparent"></div>
<div class="t" style="left:1462.5px;top:434.5px;font-size:12px;color:#dedede;font-weight:normal;">Auto</div>
<div class="t" style="right:226.29999999999995px;top:460.0px;font-size:12px;color:#dedede">End:</div>
<div style="position:absolute;left:1314.5px;top:456.5px;width:94.5px;height:18.5px;border:1px solid #5c5c5c;border-radius:2px;background:transparent"></div>
<svg style="position:absolute;left:1324px;top:459.5px;" width="64" height="14" viewBox="0 0 64 14"><path d="M4 7 H60" stroke="#ececec" stroke-width="1.6" fill="none" stroke-linecap="round" stroke-linejoin="round"/><path d="M62 7 L55 3.2 V10.8 Z" fill="#ececec"/></svg>
<svg style="position:absolute;left:1397px;top:463.5px;" width="10" height="8" viewBox="0 0 10 8"><path d="M2 2.5 L5 5.5 L8 2.5" stroke="#aaa" stroke-width="1.1" fill="none" stroke-linecap="round" stroke-linejoin="round"/></svg>
<div style="position:absolute;left:1459.5px;top:456.5px;width:38.5px;height:18.5px;border:1px solid #5c5c5c;border-radius:2px;background:transparent"></div>
<div class="t" style="left:1462.5px;top:461px;font-size:12px;color:#dedede;font-weight:normal;">Auto</div>
<div style="position:absolute;left:1314.5px;top:487.5px;width:14px;height:14px;border:1px solid #6a6a6a;border-radius:2px;box-sizing:border-box"></div>
<svg style="position:absolute;left:1314.5px;top:487.5px;" width="14" height="14" viewBox="0 0 14 14"><path d="M3 7 L6 10.5 L11.5 3" stroke="#e0e0e0" stroke-width="1.2" fill="none" stroke-linecap="round" stroke-linejoin="round"/></svg>
<div class="t" style="left:1331px;top:488px;font-size:12px;color:#dedede;font-weight:normal;">Show Caption</div>
<div style="position:absolute;left:1418px;top:483px;width:34px;height:21px;border:1px solid #555;border-radius:3px;background:#333"></div>
<div class="t" style="left:1425.5px;top:488.5px;font-size:12px;color:#dedede;font-weight:normal;">Edit</div>
<div style="position:absolute;left:1314.5px;top:513px;width:14px;height:14px;border:1px solid #6a6a6a;border-radius:2px;box-sizing:border-box"></div>
<svg style="position:absolute;left:1314.5px;top:513px;" width="14" height="14" viewBox="0 0 14 14"><path d="M3 7 L6 10.5 L11.5 3" stroke="#e0e0e0" stroke-width="1.2" fill="none" stroke-linecap="round" stroke-linejoin="round"/></svg>
<div class="t" style="left:1331px;top:513.5px;font-size:12px;color:#dedede;font-weight:normal;">Show Caption Leader Line</div>
<div class="t" style="right:226.29999999999995px;top:537.5px;font-size:12px;color:#dedede">Font:</div>
<div style="position:absolute;left:1314.5px;top:534.5px;width:153.5px;height:18.0px;border:1px solid #5c5c5c;border-radius:2px;background:transparent"></div>
<div class="t" style="left:1318.5px;top:538px;font-size:12px;color:#dedede;font-weight:normal;">Helvetica</div>
<svg style="position:absolute;left:1456.5px;top:540.5px;" width="10" height="8" viewBox="0 0 10 8"><path d="M2 2.5 L5 5.5 L8 2.5" stroke="#aaa" stroke-width="1.1" fill="none" stroke-linecap="round" stroke-linejoin="round"/></svg>
<div class="t" style="right:226.29999999999995px;top:567.0px;font-size:12px;color:#dedede">Font Size:</div>
<div style="position:absolute;left:1314.5px;top:561.5px;width:152.5px;height:18.0px;border:1px solid #5c5c5c;border-radius:2px;background:transparent"></div>
<div style="position:absolute;left:1454px;top:562.5px;width:1px;height:18.0px;background:#5c5c5c"></div>
<div class="t" style="left:1321px;top:565px;font-size:12px;color:#dedede;font-weight:normal;">12</div>
<svg style="position:absolute;left:1456.5px;top:567.5px;" width="10" height="8" viewBox="0 0 10 8"><path d="M2 2.5 L5 5.5 L8 2.5" stroke="#aaa" stroke-width="1.1" fill="none" stroke-linecap="round" stroke-linejoin="round"/></svg>
<div class="t" style="right:226.29999999999995px;top:598.5px;font-size:12px;color:#dedede">Font Color:</div>
<div style="position:absolute;left:1314px;top:593px;width:23px;height:23px;border:1px solid #5c5c5c;border-radius:3px;background:transparent"></div>
<div style="position:absolute;left:1319px;top:598.5px;width:14px;height:14px;background:#e8230c;border:0.6px solid #f0a090;box-sizing:border-box"></div>
<div style="position:absolute;left:1242px;top:624px;width:248px;height:13px;overflow:hidden"><div class="t" style="right:181.5px;top:5px;font-size:12px;color:#dedede">Font Style:</div><div class="t" style="left:79px;top:6px;font-size:12px;color:#dedede;font-weight:bold">B</div><div class="t" style="left:109px;top:6px;font-size:12px;color:#dedede;font-style:italic">I</div><svg style="position:absolute;left:0;top:0" width="248" height="13"><path d="M136 6 H146.5 M141.20000000000005 6 V14 M165 6 H175.5 M170.20000000000005 6 V14" stroke="#e8e8e8" stroke-width="1.7" fill="none"/><path d="M199.5 7 H208 M203.70000000000005 7 V14 M210.5 3.5 V7" stroke="#d8d8d8" stroke-width="1.1" fill="none"/><path d="M227 7 H236 M231.5 7 V14" stroke="#d0d0d0" stroke-width="1.1" fill="none"/></svg></div>
<div style="position:absolute;left:1406.5px;top:634px;width:11px;height:1px;background:#c9a53a"></div>
<div style="position:absolute;left:1426px;top:620.5px;width:5px;height:1px;background:#bbb"></div>
<svg style="position:absolute;left:1246px;top:650px;" width="12" height="12" viewBox="0 0 12 12"><path d="M2.5 4 L6 7.5 L9.5 4" stroke="#aaa" stroke-width="1.1" fill="none" stroke-linecap="round" stroke-linejoin="round"/></svg>
<div class="t" style="left:1265.5px;top:648.5px;font-size:13.6px;color:#e6e6e6;font-weight:normal;">Custom</div>
<div class="t" style="right:109.29999999999995px;top:677.5px;font-size:12px;color:#dedede">Responsibility:</div>
<div style="position:absolute;left:1431.5px;top:674.5px;width:66.5px;height:18.0px;border:1px solid #5c5c5c;border-radius:2px;background:transparent"></div>
<div class="t" style="left:1434.5px;top:678px;font-size:12px;color:#dedede;font-weight:normal;">Select</div>
<div class="t" style="right:109.29999999999995px;top:702.5px;font-size:12px;color:#dedede">Material:</div>
<div style="position:absolute;left:1431.5px;top:700.5px;width:66.5px;height:17.5px;border:1px solid #5c5c5c;border-radius:2px;background:transparent"></div>
<div class="t" style="left:1434.5px;top:703px;font-size:12px;color:#dedede;font-weight:normal;">Select</div>
<div class="t" style="right:109.29999999999995px;top:728.0px;font-size:12px;color:#dedede">Cost Analysis - Floor Area:</div>
<div style="position:absolute;left:1431.5px;top:725.5px;width:66.5px;height:22.5px;border:1px solid #5c5c5c;border-radius:2px;background:transparent"></div>
<div style="position:absolute;left:1490px;top:121px;width:16px;height:619px;background:linear-gradient(#eeeeee,#e6e6e6 50%,#c8c8c8)"></div>
<div style="position:absolute;left:1490px;top:198px;width:16px;height:276px;background:#c9c9c9"></div>
<svg style="position:absolute;left:1490px;top:121px;" width="16" height="16" viewBox="0 0 16 16"><path d="M4 10 L8 6 L12 10" stroke="#444" stroke-width="1.3" fill="none" stroke-linecap="round" stroke-linejoin="round"/></svg>
<svg style="position:absolute;left:1490px;top:722px;" width="16" height="16" viewBox="0 0 16 16"><path d="M4 6 L8 10 L12 6" stroke="#444" stroke-width="1.3" fill="none" stroke-linecap="round" stroke-linejoin="round"/></svg>
<div style="position:absolute;left:1240px;top:740px;width:296px;height:6px;background:#161616"></div>
<div style="position:absolute;left:1309px;top:511.5px;width:46px;height:46px;border-radius:50%;background:radial-gradient(circle, rgba(190,182,48,0.74) 0%, rgba(190,182,48,0.66) 64%, rgba(190,182,48,0.0) 100%)"></div>
<svg style="position:absolute;left:1324.5px;top:521px;" width="18" height="27" viewBox="0 0 18 27"><path d="M1.3 1.3 V20.5 L6 16 L9.5 24 L12.3 22.8 L8.9 15 L15.2 15 Z" fill="#ffffff" stroke="#222" stroke-width="1"/></svg>
<div style="position:absolute;left:1535px;top:0px;width:1px;height:425px;background:#c4c4c4"></div>
<div style="position:absolute;left:1535px;top:425px;width:1px;height:45px;background:#3a2c14"></div>
</body></html>
